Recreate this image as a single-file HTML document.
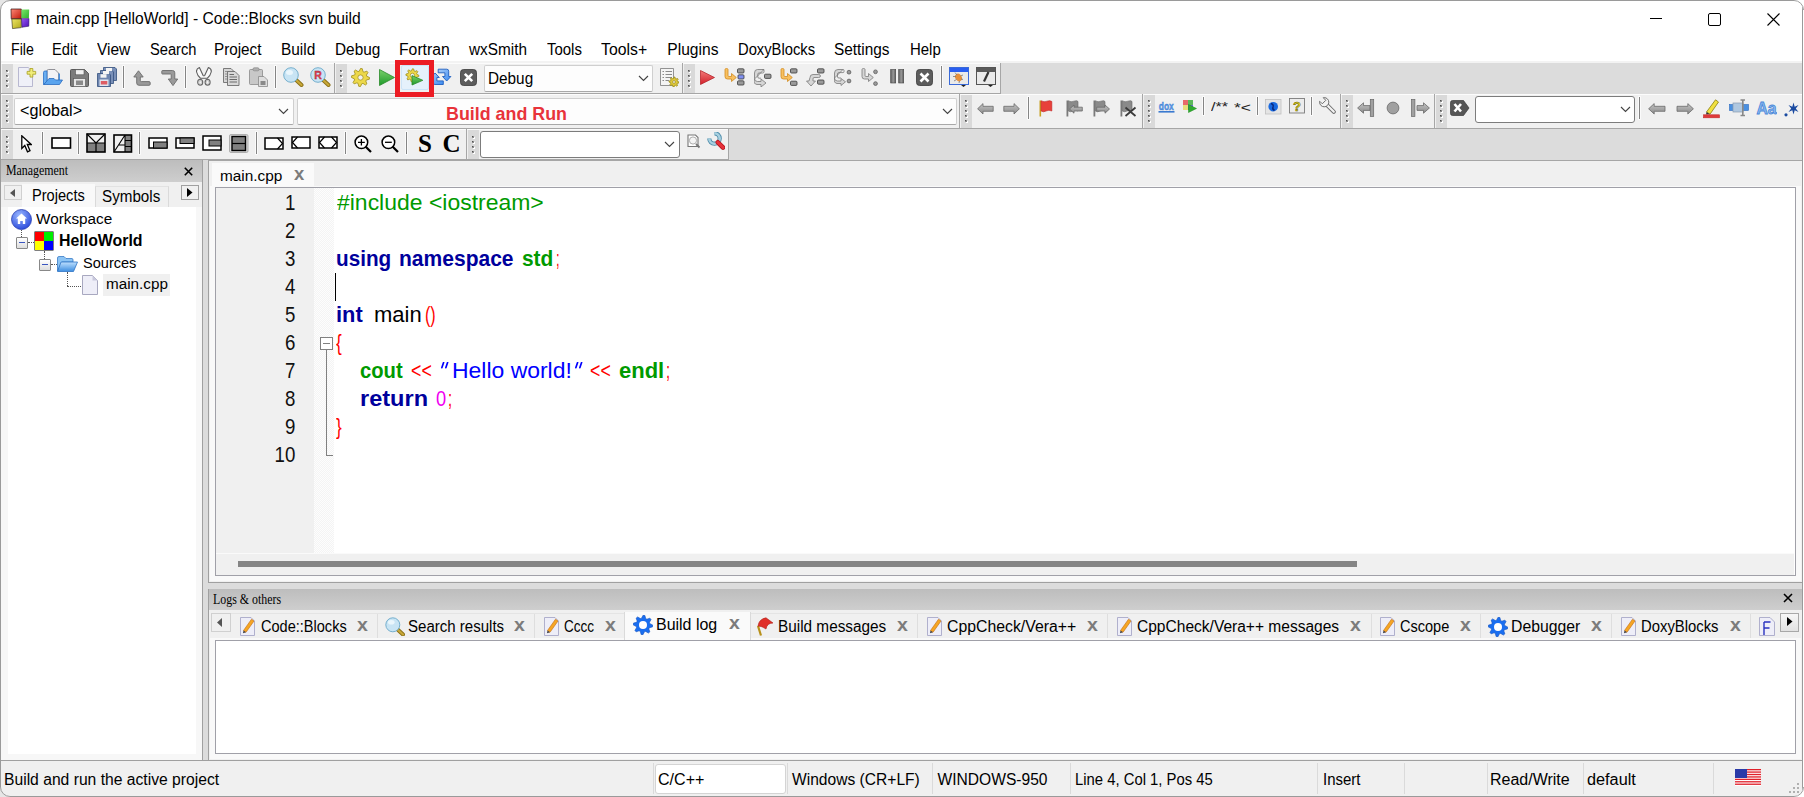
<!DOCTYPE html>
<html><head><meta charset="utf-8"><style>
html,body{margin:0;padding:0;}
body{width:1804px;height:797px;overflow:hidden;position:relative;background:#fff;font-family:"Liberation Sans",sans-serif;}
body>div,body>svg{position:absolute;}
.t{white-space:pre;}
</style></head><body>
<div style="left:0px;top:0px;width:1804px;height:797px;background:#fff"></div>
<div class="t" style="left:35.50px;top:10.71px;font-size:15.7px;line-height:15.7px;color:#000;font-weight:normal;font-family:'Liberation Sans', sans-serif;transform:scaleX(0.9966);transform-origin:0 0;">main.cpp [HelloWorld] - Code::Blocks svn build</div>
<svg style="left:10px;top:8px" width="21" height="22" viewBox="0 0 21 22"><defs><linearGradient id="lr" x1="0" y1="0" x2="1" y2="1"><stop offset="0" stop-color="#ff8a78"/><stop offset="1" stop-color="#c01808"/></linearGradient><linearGradient id="lg" x1="0" y1="0" x2="1" y2="1"><stop offset="0" stop-color="#78e868"/><stop offset="1" stop-color="#30b030"/></linearGradient><linearGradient id="ly" x1="0" y1="0" x2="1" y2="1"><stop offset="0" stop-color="#eee668"/><stop offset="1" stop-color="#b0a818"/></linearGradient><linearGradient id="lp" x1="0" y1="0" x2="1" y2="1"><stop offset="0" stop-color="#9a58f0"/><stop offset="1" stop-color="#4a10b8"/></linearGradient></defs><path d="M1 1H11.3V10.8H1.2Z" fill="url(#lr)" stroke="#301010" stroke-width="0.7"/><path d="M11.5 1.5H19.2L18.9 10H11.5Z" fill="url(#lg)"/><path d="M1.8 11H11.3V19.6L2.5 20.6Z" fill="url(#ly)" stroke="#302a10" stroke-width="0.6"/><path d="M11.5 10.6H19L18.8 18.2L12 19.3Z" fill="url(#lp)" stroke="#200850" stroke-width="0.5"/></svg>
<div style="left:1650px;top:18px;width:12px;height:1px;background:#000"></div>
<div style="left:1708px;top:13px;width:11px;height:11px;border:1px solid #000;border-radius:2px"></div>
<svg style="left:1766.5px;top:12.5px" width="13" height="13" viewBox="0 0 13 13"><path d="M0.5 0.5L12.5 12.5M12.5 0.5L0.5 12.5" stroke="#000" stroke-width="1.1"/></svg>
<div class="t" style="left:10.60px;top:42.09px;font-size:15.6px;line-height:15.6px;color:#000;font-weight:normal;font-family:'Liberation Sans', sans-serif;transform:scaleX(0.9080);transform-origin:0 0;">File</div>
<div class="t" style="left:52.10px;top:42.09px;font-size:15.6px;line-height:15.6px;color:#000;font-weight:normal;font-family:'Liberation Sans', sans-serif;transform:scaleX(0.9429);transform-origin:0 0;">Edit</div>
<div class="t" style="left:97.10px;top:42.09px;font-size:15.6px;line-height:15.6px;color:#000;font-weight:normal;font-family:'Liberation Sans', sans-serif;transform:scaleX(0.9941);transform-origin:0 0;">View</div>
<div class="t" style="left:149.50px;top:42.09px;font-size:15.6px;line-height:15.6px;color:#000;font-weight:normal;font-family:'Liberation Sans', sans-serif;transform:scaleX(0.9408);transform-origin:0 0;">Search</div>
<div class="t" style="left:214.20px;top:42.09px;font-size:15.6px;line-height:15.6px;color:#000;font-weight:normal;font-family:'Liberation Sans', sans-serif;transform:scaleX(0.9776);transform-origin:0 0;">Project</div>
<div class="t" style="left:280.70px;top:42.09px;font-size:15.6px;line-height:15.6px;color:#000;font-weight:normal;font-family:'Liberation Sans', sans-serif;transform:scaleX(0.9886);transform-origin:0 0;">Build</div>
<div class="t" style="left:334.70px;top:42.09px;font-size:15.6px;line-height:15.6px;color:#000;font-weight:normal;font-family:'Liberation Sans', sans-serif;transform:scaleX(0.9848);transform-origin:0 0;">Debug</div>
<div class="t" style="left:399.20px;top:42.09px;font-size:15.6px;line-height:15.6px;color:#000;font-weight:normal;font-family:'Liberation Sans', sans-serif;transform:scaleX(1.0100);transform-origin:0 0;">Fortran</div>
<div class="t" style="left:469.28px;top:42.09px;font-size:15.6px;line-height:15.6px;color:#000;font-weight:normal;font-family:'Liberation Sans', sans-serif;transform:scaleX(0.9833);transform-origin:0 0;">wxSmith</div>
<div class="t" style="left:546.50px;top:42.09px;font-size:15.6px;line-height:15.6px;color:#000;font-weight:normal;font-family:'Liberation Sans', sans-serif;transform:scaleX(0.9595);transform-origin:0 0;">Tools</div>
<div class="t" style="left:601.40px;top:42.09px;font-size:15.6px;line-height:15.6px;color:#000;font-weight:normal;font-family:'Liberation Sans', sans-serif;transform:scaleX(1.0130);transform-origin:0 0;">Tools+</div>
<div class="t" style="left:667.30px;top:42.09px;font-size:15.6px;line-height:15.6px;color:#000;font-weight:normal;font-family:'Liberation Sans', sans-serif;transform:scaleX(1.0000);transform-origin:0 0;">Plugins</div>
<div class="t" style="left:737.70px;top:42.09px;font-size:15.6px;line-height:15.6px;color:#000;font-weight:normal;font-family:'Liberation Sans', sans-serif;transform:scaleX(0.9463);transform-origin:0 0;">DoxyBlocks</div>
<div class="t" style="left:834.20px;top:42.09px;font-size:15.6px;line-height:15.6px;color:#000;font-weight:normal;font-family:'Liberation Sans', sans-serif;transform:scaleX(0.9860);transform-origin:0 0;">Settings</div>
<div class="t" style="left:909.60px;top:42.09px;font-size:15.6px;line-height:15.6px;color:#000;font-weight:normal;font-family:'Liberation Sans', sans-serif;transform:scaleX(0.9594);transform-origin:0 0;">Help</div>
<div style="left:1px;top:62px;width:1802px;height:99px;background:#dcdcdc"></div>
<div style="left:1px;top:61px;width:1802px;height:2px;background:#f3f3f3"></div>
<div style="left:1px;top:63px;width:334px;height:31px;background:#f0f0f0;box-shadow:inset 0 1px 0 #fcfcfc;border-right:1px solid #a6a6a6;border-bottom:1px solid #a6a6a6;box-sizing:border-box"></div>
<div style="left:335px;top:63px;width:348px;height:31px;background:#f0f0f0;box-shadow:inset 0 1px 0 #fcfcfc;border-right:1px solid #a6a6a6;border-bottom:1px solid #a6a6a6;box-sizing:border-box"></div>
<div style="left:683px;top:63px;width:318px;height:31px;background:#f0f0f0;box-shadow:inset 0 1px 0 #fcfcfc;border-right:1px solid #a6a6a6;border-bottom:1px solid #a6a6a6;box-sizing:border-box"></div>
<div style="left:1px;top:94px;width:959px;height:35px;background:#f0f0f0;box-shadow:inset 0 1px 0 #fcfcfc;border-right:1px solid #a6a6a6;border-bottom:1px solid #a6a6a6;box-sizing:border-box"></div>
<div style="left:960px;top:94px;width:183px;height:35px;background:#f0f0f0;box-shadow:inset 0 1px 0 #fcfcfc;border-right:1px solid #a6a6a6;border-bottom:1px solid #a6a6a6;box-sizing:border-box"></div>
<div style="left:1143px;top:94px;width:198px;height:35px;background:#f0f0f0;box-shadow:inset 0 1px 0 #fcfcfc;border-right:1px solid #a6a6a6;border-bottom:1px solid #a6a6a6;box-sizing:border-box"></div>
<div style="left:1341px;top:94px;width:94px;height:35px;background:#f0f0f0;box-shadow:inset 0 1px 0 #fcfcfc;border-right:1px solid #a6a6a6;border-bottom:1px solid #a6a6a6;box-sizing:border-box"></div>
<div style="left:1435px;top:94px;width:368px;height:35px;background:#f0f0f0;box-shadow:inset 0 1px 0 #fcfcfc;border-right:1px solid #a6a6a6;border-bottom:1px solid #a6a6a6;box-sizing:border-box"></div>
<div style="left:1px;top:129px;width:466px;height:31px;background:#f0f0f0;box-shadow:inset 0 1px 0 #fcfcfc;border-right:1px solid #a6a6a6;border-bottom:1px solid #a6a6a6;box-sizing:border-box"></div>
<div style="left:467px;top:129px;width:262px;height:31px;background:#f0f0f0;box-shadow:inset 0 1px 0 #fcfcfc;border-right:1px solid #a6a6a6;border-bottom:1px solid #a6a6a6;box-sizing:border-box"></div>
<div style="left:2px;top:64px;width:11px;height:29px;background:#d9d9d9"></div>
<div style="left:6px;top:70px;width:2px;height:2px;background:#8a8a8a"></div>
<div style="left:6px;top:70px;width:1px;height:1px;background:#505050"></div>
<div style="left:7px;top:72px;width:2px;height:1px;background:#fff"></div>
<div style="left:8px;top:71px;width:1px;height:1px;background:#fff"></div>
<div style="left:6px;top:75px;width:2px;height:2px;background:#8a8a8a"></div>
<div style="left:6px;top:75px;width:1px;height:1px;background:#505050"></div>
<div style="left:7px;top:77px;width:2px;height:1px;background:#fff"></div>
<div style="left:8px;top:76px;width:1px;height:1px;background:#fff"></div>
<div style="left:6px;top:80px;width:2px;height:2px;background:#8a8a8a"></div>
<div style="left:6px;top:80px;width:1px;height:1px;background:#505050"></div>
<div style="left:7px;top:82px;width:2px;height:1px;background:#fff"></div>
<div style="left:8px;top:81px;width:1px;height:1px;background:#fff"></div>
<div style="left:6px;top:85px;width:2px;height:2px;background:#8a8a8a"></div>
<div style="left:6px;top:85px;width:1px;height:1px;background:#505050"></div>
<div style="left:7px;top:87px;width:2px;height:1px;background:#fff"></div>
<div style="left:8px;top:86px;width:1px;height:1px;background:#fff"></div>
<div style="left:336px;top:64px;width:11px;height:29px;background:#d9d9d9"></div>
<div style="left:340px;top:70px;width:2px;height:2px;background:#8a8a8a"></div>
<div style="left:340px;top:70px;width:1px;height:1px;background:#505050"></div>
<div style="left:341px;top:72px;width:2px;height:1px;background:#fff"></div>
<div style="left:342px;top:71px;width:1px;height:1px;background:#fff"></div>
<div style="left:340px;top:75px;width:2px;height:2px;background:#8a8a8a"></div>
<div style="left:340px;top:75px;width:1px;height:1px;background:#505050"></div>
<div style="left:341px;top:77px;width:2px;height:1px;background:#fff"></div>
<div style="left:342px;top:76px;width:1px;height:1px;background:#fff"></div>
<div style="left:340px;top:80px;width:2px;height:2px;background:#8a8a8a"></div>
<div style="left:340px;top:80px;width:1px;height:1px;background:#505050"></div>
<div style="left:341px;top:82px;width:2px;height:1px;background:#fff"></div>
<div style="left:342px;top:81px;width:1px;height:1px;background:#fff"></div>
<div style="left:340px;top:85px;width:2px;height:2px;background:#8a8a8a"></div>
<div style="left:340px;top:85px;width:1px;height:1px;background:#505050"></div>
<div style="left:341px;top:87px;width:2px;height:1px;background:#fff"></div>
<div style="left:342px;top:86px;width:1px;height:1px;background:#fff"></div>
<div style="left:684px;top:64px;width:11px;height:29px;background:#d9d9d9"></div>
<div style="left:688px;top:70px;width:2px;height:2px;background:#8a8a8a"></div>
<div style="left:688px;top:70px;width:1px;height:1px;background:#505050"></div>
<div style="left:689px;top:72px;width:2px;height:1px;background:#fff"></div>
<div style="left:690px;top:71px;width:1px;height:1px;background:#fff"></div>
<div style="left:688px;top:75px;width:2px;height:2px;background:#8a8a8a"></div>
<div style="left:688px;top:75px;width:1px;height:1px;background:#505050"></div>
<div style="left:689px;top:77px;width:2px;height:1px;background:#fff"></div>
<div style="left:690px;top:76px;width:1px;height:1px;background:#fff"></div>
<div style="left:688px;top:80px;width:2px;height:2px;background:#8a8a8a"></div>
<div style="left:688px;top:80px;width:1px;height:1px;background:#505050"></div>
<div style="left:689px;top:82px;width:2px;height:1px;background:#fff"></div>
<div style="left:690px;top:81px;width:1px;height:1px;background:#fff"></div>
<div style="left:688px;top:85px;width:2px;height:2px;background:#8a8a8a"></div>
<div style="left:688px;top:85px;width:1px;height:1px;background:#505050"></div>
<div style="left:689px;top:87px;width:2px;height:1px;background:#fff"></div>
<div style="left:690px;top:86px;width:1px;height:1px;background:#fff"></div>
<div style="left:2px;top:95px;width:11px;height:33px;background:#d9d9d9"></div>
<div style="left:6px;top:100px;width:2px;height:2px;background:#8a8a8a"></div>
<div style="left:6px;top:100px;width:1px;height:1px;background:#505050"></div>
<div style="left:7px;top:102px;width:2px;height:1px;background:#fff"></div>
<div style="left:8px;top:101px;width:1px;height:1px;background:#fff"></div>
<div style="left:6px;top:105px;width:2px;height:2px;background:#8a8a8a"></div>
<div style="left:6px;top:105px;width:1px;height:1px;background:#505050"></div>
<div style="left:7px;top:107px;width:2px;height:1px;background:#fff"></div>
<div style="left:8px;top:106px;width:1px;height:1px;background:#fff"></div>
<div style="left:6px;top:110px;width:2px;height:2px;background:#8a8a8a"></div>
<div style="left:6px;top:110px;width:1px;height:1px;background:#505050"></div>
<div style="left:7px;top:112px;width:2px;height:1px;background:#fff"></div>
<div style="left:8px;top:111px;width:1px;height:1px;background:#fff"></div>
<div style="left:6px;top:115px;width:2px;height:2px;background:#8a8a8a"></div>
<div style="left:6px;top:115px;width:1px;height:1px;background:#505050"></div>
<div style="left:7px;top:117px;width:2px;height:1px;background:#fff"></div>
<div style="left:8px;top:116px;width:1px;height:1px;background:#fff"></div>
<div style="left:6px;top:120px;width:2px;height:2px;background:#8a8a8a"></div>
<div style="left:6px;top:120px;width:1px;height:1px;background:#505050"></div>
<div style="left:7px;top:122px;width:2px;height:1px;background:#fff"></div>
<div style="left:8px;top:121px;width:1px;height:1px;background:#fff"></div>
<div style="left:961px;top:95px;width:11px;height:33px;background:#d9d9d9"></div>
<div style="left:965px;top:100px;width:2px;height:2px;background:#8a8a8a"></div>
<div style="left:965px;top:100px;width:1px;height:1px;background:#505050"></div>
<div style="left:966px;top:102px;width:2px;height:1px;background:#fff"></div>
<div style="left:967px;top:101px;width:1px;height:1px;background:#fff"></div>
<div style="left:965px;top:105px;width:2px;height:2px;background:#8a8a8a"></div>
<div style="left:965px;top:105px;width:1px;height:1px;background:#505050"></div>
<div style="left:966px;top:107px;width:2px;height:1px;background:#fff"></div>
<div style="left:967px;top:106px;width:1px;height:1px;background:#fff"></div>
<div style="left:965px;top:110px;width:2px;height:2px;background:#8a8a8a"></div>
<div style="left:965px;top:110px;width:1px;height:1px;background:#505050"></div>
<div style="left:966px;top:112px;width:2px;height:1px;background:#fff"></div>
<div style="left:967px;top:111px;width:1px;height:1px;background:#fff"></div>
<div style="left:965px;top:115px;width:2px;height:2px;background:#8a8a8a"></div>
<div style="left:965px;top:115px;width:1px;height:1px;background:#505050"></div>
<div style="left:966px;top:117px;width:2px;height:1px;background:#fff"></div>
<div style="left:967px;top:116px;width:1px;height:1px;background:#fff"></div>
<div style="left:965px;top:120px;width:2px;height:2px;background:#8a8a8a"></div>
<div style="left:965px;top:120px;width:1px;height:1px;background:#505050"></div>
<div style="left:966px;top:122px;width:2px;height:1px;background:#fff"></div>
<div style="left:967px;top:121px;width:1px;height:1px;background:#fff"></div>
<div style="left:1144px;top:95px;width:11px;height:33px;background:#d9d9d9"></div>
<div style="left:1148px;top:100px;width:2px;height:2px;background:#8a8a8a"></div>
<div style="left:1148px;top:100px;width:1px;height:1px;background:#505050"></div>
<div style="left:1149px;top:102px;width:2px;height:1px;background:#fff"></div>
<div style="left:1150px;top:101px;width:1px;height:1px;background:#fff"></div>
<div style="left:1148px;top:105px;width:2px;height:2px;background:#8a8a8a"></div>
<div style="left:1148px;top:105px;width:1px;height:1px;background:#505050"></div>
<div style="left:1149px;top:107px;width:2px;height:1px;background:#fff"></div>
<div style="left:1150px;top:106px;width:1px;height:1px;background:#fff"></div>
<div style="left:1148px;top:110px;width:2px;height:2px;background:#8a8a8a"></div>
<div style="left:1148px;top:110px;width:1px;height:1px;background:#505050"></div>
<div style="left:1149px;top:112px;width:2px;height:1px;background:#fff"></div>
<div style="left:1150px;top:111px;width:1px;height:1px;background:#fff"></div>
<div style="left:1148px;top:115px;width:2px;height:2px;background:#8a8a8a"></div>
<div style="left:1148px;top:115px;width:1px;height:1px;background:#505050"></div>
<div style="left:1149px;top:117px;width:2px;height:1px;background:#fff"></div>
<div style="left:1150px;top:116px;width:1px;height:1px;background:#fff"></div>
<div style="left:1148px;top:120px;width:2px;height:2px;background:#8a8a8a"></div>
<div style="left:1148px;top:120px;width:1px;height:1px;background:#505050"></div>
<div style="left:1149px;top:122px;width:2px;height:1px;background:#fff"></div>
<div style="left:1150px;top:121px;width:1px;height:1px;background:#fff"></div>
<div style="left:1342px;top:95px;width:11px;height:33px;background:#d9d9d9"></div>
<div style="left:1346px;top:100px;width:2px;height:2px;background:#8a8a8a"></div>
<div style="left:1346px;top:100px;width:1px;height:1px;background:#505050"></div>
<div style="left:1347px;top:102px;width:2px;height:1px;background:#fff"></div>
<div style="left:1348px;top:101px;width:1px;height:1px;background:#fff"></div>
<div style="left:1346px;top:105px;width:2px;height:2px;background:#8a8a8a"></div>
<div style="left:1346px;top:105px;width:1px;height:1px;background:#505050"></div>
<div style="left:1347px;top:107px;width:2px;height:1px;background:#fff"></div>
<div style="left:1348px;top:106px;width:1px;height:1px;background:#fff"></div>
<div style="left:1346px;top:110px;width:2px;height:2px;background:#8a8a8a"></div>
<div style="left:1346px;top:110px;width:1px;height:1px;background:#505050"></div>
<div style="left:1347px;top:112px;width:2px;height:1px;background:#fff"></div>
<div style="left:1348px;top:111px;width:1px;height:1px;background:#fff"></div>
<div style="left:1346px;top:115px;width:2px;height:2px;background:#8a8a8a"></div>
<div style="left:1346px;top:115px;width:1px;height:1px;background:#505050"></div>
<div style="left:1347px;top:117px;width:2px;height:1px;background:#fff"></div>
<div style="left:1348px;top:116px;width:1px;height:1px;background:#fff"></div>
<div style="left:1346px;top:120px;width:2px;height:2px;background:#8a8a8a"></div>
<div style="left:1346px;top:120px;width:1px;height:1px;background:#505050"></div>
<div style="left:1347px;top:122px;width:2px;height:1px;background:#fff"></div>
<div style="left:1348px;top:121px;width:1px;height:1px;background:#fff"></div>
<div style="left:1436px;top:95px;width:11px;height:33px;background:#d9d9d9"></div>
<div style="left:1440px;top:100px;width:2px;height:2px;background:#8a8a8a"></div>
<div style="left:1440px;top:100px;width:1px;height:1px;background:#505050"></div>
<div style="left:1441px;top:102px;width:2px;height:1px;background:#fff"></div>
<div style="left:1442px;top:101px;width:1px;height:1px;background:#fff"></div>
<div style="left:1440px;top:105px;width:2px;height:2px;background:#8a8a8a"></div>
<div style="left:1440px;top:105px;width:1px;height:1px;background:#505050"></div>
<div style="left:1441px;top:107px;width:2px;height:1px;background:#fff"></div>
<div style="left:1442px;top:106px;width:1px;height:1px;background:#fff"></div>
<div style="left:1440px;top:110px;width:2px;height:2px;background:#8a8a8a"></div>
<div style="left:1440px;top:110px;width:1px;height:1px;background:#505050"></div>
<div style="left:1441px;top:112px;width:2px;height:1px;background:#fff"></div>
<div style="left:1442px;top:111px;width:1px;height:1px;background:#fff"></div>
<div style="left:1440px;top:115px;width:2px;height:2px;background:#8a8a8a"></div>
<div style="left:1440px;top:115px;width:1px;height:1px;background:#505050"></div>
<div style="left:1441px;top:117px;width:2px;height:1px;background:#fff"></div>
<div style="left:1442px;top:116px;width:1px;height:1px;background:#fff"></div>
<div style="left:1440px;top:120px;width:2px;height:2px;background:#8a8a8a"></div>
<div style="left:1440px;top:120px;width:1px;height:1px;background:#505050"></div>
<div style="left:1441px;top:122px;width:2px;height:1px;background:#fff"></div>
<div style="left:1442px;top:121px;width:1px;height:1px;background:#fff"></div>
<div style="left:2px;top:130px;width:11px;height:29px;background:#d9d9d9"></div>
<div style="left:6px;top:136px;width:2px;height:2px;background:#8a8a8a"></div>
<div style="left:6px;top:136px;width:1px;height:1px;background:#505050"></div>
<div style="left:7px;top:138px;width:2px;height:1px;background:#fff"></div>
<div style="left:8px;top:137px;width:1px;height:1px;background:#fff"></div>
<div style="left:6px;top:141px;width:2px;height:2px;background:#8a8a8a"></div>
<div style="left:6px;top:141px;width:1px;height:1px;background:#505050"></div>
<div style="left:7px;top:143px;width:2px;height:1px;background:#fff"></div>
<div style="left:8px;top:142px;width:1px;height:1px;background:#fff"></div>
<div style="left:6px;top:146px;width:2px;height:2px;background:#8a8a8a"></div>
<div style="left:6px;top:146px;width:1px;height:1px;background:#505050"></div>
<div style="left:7px;top:148px;width:2px;height:1px;background:#fff"></div>
<div style="left:8px;top:147px;width:1px;height:1px;background:#fff"></div>
<div style="left:6px;top:151px;width:2px;height:2px;background:#8a8a8a"></div>
<div style="left:6px;top:151px;width:1px;height:1px;background:#505050"></div>
<div style="left:7px;top:153px;width:2px;height:1px;background:#fff"></div>
<div style="left:8px;top:152px;width:1px;height:1px;background:#fff"></div>
<div style="left:468px;top:130px;width:11px;height:29px;background:#d9d9d9"></div>
<div style="left:472px;top:136px;width:2px;height:2px;background:#8a8a8a"></div>
<div style="left:472px;top:136px;width:1px;height:1px;background:#505050"></div>
<div style="left:473px;top:138px;width:2px;height:1px;background:#fff"></div>
<div style="left:474px;top:137px;width:1px;height:1px;background:#fff"></div>
<div style="left:472px;top:141px;width:2px;height:2px;background:#8a8a8a"></div>
<div style="left:472px;top:141px;width:1px;height:1px;background:#505050"></div>
<div style="left:473px;top:143px;width:2px;height:1px;background:#fff"></div>
<div style="left:474px;top:142px;width:1px;height:1px;background:#fff"></div>
<div style="left:472px;top:146px;width:2px;height:2px;background:#8a8a8a"></div>
<div style="left:472px;top:146px;width:1px;height:1px;background:#505050"></div>
<div style="left:473px;top:148px;width:2px;height:1px;background:#fff"></div>
<div style="left:474px;top:147px;width:1px;height:1px;background:#fff"></div>
<div style="left:472px;top:151px;width:2px;height:2px;background:#8a8a8a"></div>
<div style="left:472px;top:151px;width:1px;height:1px;background:#505050"></div>
<div style="left:473px;top:153px;width:2px;height:1px;background:#fff"></div>
<div style="left:474px;top:152px;width:1px;height:1px;background:#fff"></div>
<div style="left:122px;top:65px;width:3px;height:24px;background:#fbfbfb;border-radius:1px"></div>
<div style="left:123px;top:66px;width:1px;height:22px;background:#858585"></div>
<div style="left:184px;top:65px;width:3px;height:24px;background:#fbfbfb;border-radius:1px"></div>
<div style="left:185px;top:66px;width:1px;height:22px;background:#858585"></div>
<div style="left:274px;top:65px;width:3px;height:24px;background:#fbfbfb;border-radius:1px"></div>
<div style="left:275px;top:66px;width:1px;height:22px;background:#858585"></div>
<div style="left:940px;top:65px;width:3px;height:24px;background:#fbfbfb;border-radius:1px"></div>
<div style="left:941px;top:66px;width:1px;height:22px;background:#858585"></div>
<div style="left:1027px;top:96px;width:3px;height:24px;background:#fbfbfb;border-radius:1px"></div>
<div style="left:1028px;top:97px;width:1px;height:22px;background:#858585"></div>
<div style="left:1638px;top:96px;width:3px;height:24px;background:#fbfbfb;border-radius:1px"></div>
<div style="left:1639px;top:97px;width:1px;height:22px;background:#858585"></div>
<div style="left:1202px;top:96px;width:3px;height:20px;background:#fbfbfb;border-radius:1px"></div>
<div style="left:1203px;top:97px;width:1px;height:18px;background:#858585"></div>
<div style="left:1256px;top:96px;width:3px;height:20px;background:#fbfbfb;border-radius:1px"></div>
<div style="left:1257px;top:97px;width:1px;height:18px;background:#858585"></div>
<div style="left:1310px;top:96px;width:3px;height:20px;background:#fbfbfb;border-radius:1px"></div>
<div style="left:1311px;top:97px;width:1px;height:18px;background:#858585"></div>
<div style="left:41px;top:131px;width:3px;height:24px;background:#fbfbfb;border-radius:1px"></div>
<div style="left:42px;top:132px;width:1px;height:22px;background:#858585"></div>
<div style="left:77px;top:131px;width:3px;height:24px;background:#fbfbfb;border-radius:1px"></div>
<div style="left:78px;top:132px;width:1px;height:22px;background:#858585"></div>
<div style="left:138px;top:131px;width:3px;height:24px;background:#fbfbfb;border-radius:1px"></div>
<div style="left:139px;top:132px;width:1px;height:22px;background:#858585"></div>
<div style="left:255px;top:131px;width:3px;height:24px;background:#fbfbfb;border-radius:1px"></div>
<div style="left:256px;top:132px;width:1px;height:22px;background:#858585"></div>
<div style="left:344px;top:131px;width:3px;height:24px;background:#fbfbfb;border-radius:1px"></div>
<div style="left:345px;top:132px;width:1px;height:22px;background:#858585"></div>
<div style="left:405px;top:131px;width:3px;height:24px;background:#fbfbfb;border-radius:1px"></div>
<div style="left:406px;top:132px;width:1px;height:22px;background:#858585"></div>
<div style="left:484px;top:65px;width:169px;height:27px;background:#fdfdfd;border:1px solid #cfcfcf;border-bottom-color:#a8a8a8;border-radius:2px;box-sizing:border-box"></div>
<svg style="left:638px;top:75px" width="11" height="7" viewBox="0 0 11 7"><path d="M1 1L5.5 5.5L10 1" fill="none" stroke="#444" stroke-width="1.15"/></svg>
<div class="t" style="left:487.90px;top:70.59px;font-size:15.6px;line-height:15.6px;color:#000;font-weight:normal;font-family:'Liberation Sans', sans-serif;transform:scaleX(0.9826);transform-origin:0 0;">Debug</div>
<div style="left:14px;top:98px;width:280px;height:27px;background:#fdfdfd;border:1px solid #cfcfcf;border-bottom-color:#a8a8a8;border-radius:2px;box-sizing:border-box"></div>
<svg style="left:278px;top:108px" width="11" height="7" viewBox="0 0 11 7"><path d="M1 1L5.5 5.5L10 1" fill="none" stroke="#444" stroke-width="1.15"/></svg>
<div class="t" style="left:19.80px;top:103.49px;font-size:15.6px;line-height:15.6px;color:#000;font-weight:normal;font-family:'Liberation Sans', sans-serif;transform:scaleX(1.0383);transform-origin:0 0;">&lt;global&gt;</div>
<div style="left:297px;top:98px;width:660px;height:27px;background:#fdfdfd;border:1px solid #cfcfcf;border-bottom-color:#a8a8a8;border-radius:2px;box-sizing:border-box"></div>
<svg style="left:942px;top:108px" width="11" height="7" viewBox="0 0 11 7"><path d="M1 1L5.5 5.5L10 1" fill="none" stroke="#444" stroke-width="1.15"/></svg>
<div style="left:1475px;top:96px;width:160px;height:27px;background:#fff;border:1px solid #7c7c7c;border-radius:3px;box-sizing:border-box"></div>
<svg style="left:1620px;top:106px" width="11" height="7" viewBox="0 0 11 7"><path d="M1 1L5.5 5.5L10 1" fill="none" stroke="#444" stroke-width="1.15"/></svg>
<div style="left:480px;top:131px;width:200px;height:27px;background:#fff;border:1px solid #7c7c7c;border-radius:3px;box-sizing:border-box"></div>
<svg style="left:664px;top:141px" width="11" height="7" viewBox="0 0 11 7"><path d="M1 1L5.5 5.5L10 1" fill="none" stroke="#444" stroke-width="1.15"/></svg>
<div class="t" style="left:446.00px;top:104.76px;font-size:18.6px;line-height:18.6px;color:#e8333a;font-weight:bold;font-family:'Liberation Sans', sans-serif;transform:scaleX(0.9603);transform-origin:0 0;">Build and Run</div>
<div style="left:401px;top:65px;width:28px;height:25px;background:#e5f1fb;border:1px solid #cce4f7;border-radius:2px;box-sizing:border-box"></div>
<div style="left:1px;top:160px;width:202px;height:601px;background:#f7f7f7;border-right:1px solid #a0a0a0;border-bottom:1px solid #a0a0a0;box-sizing:border-box"></div>
<div style="left:203px;top:160px;width:5px;height:601px;background:#dcdcdc"></div>
<div style="left:1px;top:160px;width:201px;height:22px;background:linear-gradient(#bdbdbd,#cecece)"></div>
<div class="t" style="left:6.00px;top:164.08px;font-size:14px;line-height:14px;color:#000;font-weight:normal;font-family:'Liberation Serif', serif;transform:scaleX(0.8493);transform-origin:0 0;">Management</div>
<svg style="left:184px;top:167px" width="9" height="9" viewBox="0 0 9 9"><path d="M0.8 0.8L8.2 8.2M8.2 0.8L0.8 8.2" stroke="#000" stroke-width="1.6"/></svg>
<div style="left:1px;top:182px;width:201px;height:25px;background:#f0f0f0"></div>
<div style="left:4px;top:185px;width:18px;height:15px;background:#f0f0f0;border:1px solid #d0d0d0;box-sizing:border-box"></div>
<svg style="left:10px;top:189px" width="6" height="8" viewBox="0 0 6 8"><path d="M5 0L0 4L5 8Z" fill="#555"/></svg>
<div style="left:181px;top:185px;width:18px;height:15px;background:#f0f0f0;border:1px solid #a0a0a0;box-sizing:border-box"></div>
<svg style="left:187px;top:188px" width="6" height="9" viewBox="0 0 6 9"><path d="M0 0L5.5 4.5L0 9Z" fill="#000"/></svg>
<div style="left:22px;top:184px;width:73px;height:24px;background:#f9f9f9"></div>
<div style="left:95px;top:186px;width:74px;height:21px;background:#f0f0f0;border-top:1px solid #e2e2e2;border-right:1px solid #dadada;border-left:1px solid #dadada;box-sizing:border-box"></div>
<div class="t" style="left:31.80px;top:188.29px;font-size:15.6px;line-height:15.6px;color:#000;font-weight:normal;font-family:'Liberation Sans', sans-serif;transform:scaleX(0.9368);transform-origin:0 0;">Projects</div>
<div class="t" style="left:101.70px;top:189.29px;font-size:15.6px;line-height:15.6px;color:#000;font-weight:normal;font-family:'Liberation Sans', sans-serif;transform:scaleX(0.9750);transform-origin:0 0;">Symbols</div>
<div style="left:8px;top:207px;width:188px;height:547px;background:#fff"></div>
<svg style="left:11px;top:209px" width="21" height="21" viewBox="0 0 21 21"><defs><radialGradient id="wsg" cx="0.4" cy="0.3" r="0.8"><stop offset="0" stop-color="#9ab8ff"/><stop offset="1" stop-color="#1f3fd8"/></radialGradient></defs><circle cx="10.5" cy="10.5" r="10" fill="url(#wsg)" stroke="#2a3fae" stroke-width="0.8"/><path d="M10.5 4.5L16 9.5H14.2V15H11.8V12H9.2V15H6.8V9.5H5Z" fill="#fff"/></svg>
<div class="t" style="left:36.00px;top:211.18px;font-size:15.5px;line-height:15.5px;color:#000;font-weight:normal;font-family:'Liberation Sans', sans-serif;transform:scaleX(0.9872);transform-origin:0 0;">Workspace</div>
<div style="left:21px;top:230px;width:0;height:7px;border-left:1px dotted #555"></div>
<div style="left:28px;top:242px;width:6px;height:0;border-top:1px dotted #555"></div>
<div style="left:16px;top:237px;width:12px;height:12px;background:linear-gradient(#fff,#ddd);border:1px solid #888;border-radius:1px;box-sizing:border-box"></div>
<div style="left:19px;top:242px;width:6px;height:1px;background:#3a55c0"></div>
<svg style="left:34px;top:231px" width="20" height="20" viewBox="0 0 20 20"><rect x="0.5" y="0.5" width="19" height="19" fill="#000"/><rect x="1" y="1" width="9" height="9" fill="#f00"/><rect x="10" y="1" width="9" height="9" fill="#0e0"/><rect x="1" y="10" width="9" height="9" fill="#ff0"/><rect x="10" y="10" width="9" height="9" fill="#00f"/></svg>
<div class="t" style="left:59.00px;top:232.94px;font-size:15.9px;line-height:15.9px;color:#000;font-weight:bold;font-family:'Liberation Sans', sans-serif;transform:scaleX(1.0000);transform-origin:0 0;">HelloWorld</div>
<div style="left:44px;top:251px;width:0;height:8px;border-left:1px dotted #555"></div>
<div style="left:51px;top:264px;width:6px;height:0;border-top:1px dotted #555"></div>
<div style="left:39px;top:259px;width:12px;height:12px;background:linear-gradient(#fff,#ddd);border:1px solid #888;border-radius:1px;box-sizing:border-box"></div>
<div style="left:42px;top:264px;width:6px;height:1px;background:#3a55c0"></div>
<svg style="left:57px;top:256px" width="21" height="16" viewBox="0 0 21 16"><defs><linearGradient id="fg" x1="0" y1="0" x2="0" y2="1"><stop offset="0" stop-color="#bfe0ff"/><stop offset="1" stop-color="#3d8ee0"/></linearGradient></defs><path d="M0.5 2Q0.5 0.5 2 0.5H7L9 2.5H15Q16 2.5 16 4V6H5L0.5 15Z" fill="#8cc4f4" stroke="#3a7cc8" stroke-width="0.8"/><path d="M4 6H20.5L16.5 15.5H0.5Z" fill="url(#fg)" stroke="#2f74c4" stroke-width="0.8"/></svg>
<div class="t" style="left:82.50px;top:254.88px;font-size:15.5px;line-height:15.5px;color:#000;font-weight:normal;font-family:'Liberation Sans', sans-serif;transform:scaleX(0.9386);transform-origin:0 0;">Sources</div>
<div style="left:67px;top:272px;width:0;height:14px;border-left:1px dotted #555"></div>
<div style="left:67px;top:286px;width:14px;height:0;border-top:1px dotted #555"></div>
<svg style="left:82px;top:275px" width="16" height="20" viewBox="0 0 16 20"><path d="M0.5 0.5H10.5L15.5 5.5V19.5H0.5Z" fill="#eeeef8" stroke="#a8a8c0"/><path d="M10.5 0.5V5.5H15.5Z" fill="#c8c8dc"/></svg>
<div style="left:103px;top:274px;width:67px;height:22px;background:#f0f0f0"></div>
<div class="t" style="left:106.00px;top:275.88px;font-size:15.5px;line-height:15.5px;color:#000;font-weight:normal;font-family:'Liberation Sans', sans-serif;transform:scaleX(0.9841);transform-origin:0 0;">main.cpp</div>
<div style="left:208px;top:160px;width:1595px;height:423px;background:#f0f0f0;border-top:1px solid #a6a6a6;border-left:1px solid #a0a0a0;border-bottom:1px solid #a0a0a0;border-right:1px solid #a0a0a0;box-sizing:border-box"></div>
<div style="left:212px;top:163px;width:102px;height:25px;background:#fafafa"></div>
<div class="t" style="left:219.50px;top:167.88px;font-size:15.5px;line-height:15.5px;color:#000;font-weight:normal;font-family:'Liberation Sans', sans-serif;transform:scaleX(0.9921);transform-origin:0 0;">main.cpp</div>
<div class="t" style="left:294.00px;top:164.84px;font-size:18.5px;line-height:18.5px;color:#7c7c7c;font-weight:bold;font-family:'Liberation Sans', sans-serif;transform:scaleX(1.0000);transform-origin:0 0;">x</div>
<div style="left:210px;top:186px;width:1591px;height:395px;background:#f9f9f9"></div>
<div style="left:215px;top:187px;width:1581px;height:389px;background:#fff;border:1px solid #a0a0a8;box-sizing:border-box"></div>
<div style="left:216px;top:188px;width:98px;height:365px;background:#f0f0f0"></div>
<div style="left:314px;top:188px;width:20px;height:365px;background:repeating-conic-gradient(#f4f4f4 0 25%,#fdfdfd 0 50%) 0 0/2px 2px"></div>
<div style="left:216px;top:553px;width:1578px;height:22px;background:#f0f0f0;border-top:1px solid #fafafa;box-sizing:border-box"></div>
<div style="left:238px;top:561px;width:1119px;height:6px;background:#858585"></div>
<div class="t" style="left:216px;width:79.4px;text-align:right;top:192.1px;font-size:22.5px;line-height:22.5px;color:#111;transform:scaleX(0.83);transform-origin:100% 0">1</div>
<div class="t" style="left:216px;width:79.4px;text-align:right;top:220.1px;font-size:22.5px;line-height:22.5px;color:#111;transform:scaleX(0.83);transform-origin:100% 0">2</div>
<div class="t" style="left:216px;width:79.4px;text-align:right;top:248.1px;font-size:22.5px;line-height:22.5px;color:#111;transform:scaleX(0.83);transform-origin:100% 0">3</div>
<div class="t" style="left:216px;width:79.4px;text-align:right;top:276.1px;font-size:22.5px;line-height:22.5px;color:#111;transform:scaleX(0.83);transform-origin:100% 0">4</div>
<div class="t" style="left:216px;width:79.4px;text-align:right;top:304.1px;font-size:22.5px;line-height:22.5px;color:#111;transform:scaleX(0.83);transform-origin:100% 0">5</div>
<div class="t" style="left:216px;width:79.4px;text-align:right;top:332.1px;font-size:22.5px;line-height:22.5px;color:#111;transform:scaleX(0.83);transform-origin:100% 0">6</div>
<div class="t" style="left:216px;width:79.4px;text-align:right;top:360.1px;font-size:22.5px;line-height:22.5px;color:#111;transform:scaleX(0.83);transform-origin:100% 0">7</div>
<div class="t" style="left:216px;width:79.4px;text-align:right;top:388.1px;font-size:22.5px;line-height:22.5px;color:#111;transform:scaleX(0.83);transform-origin:100% 0">8</div>
<div class="t" style="left:216px;width:79.4px;text-align:right;top:416.1px;font-size:22.5px;line-height:22.5px;color:#111;transform:scaleX(0.83);transform-origin:100% 0">9</div>
<div class="t" style="left:216px;width:79.4px;text-align:right;top:444.1px;font-size:22.5px;line-height:22.5px;color:#111;transform:scaleX(0.83);transform-origin:100% 0">10</div>
<div style="left:320px;top:337px;width:13px;height:13px;background:#fff;border:1px solid #808080;box-sizing:border-box"></div>
<div style="left:323px;top:343px;width:7px;height:1px;background:#808080"></div>
<div style="left:326px;top:350px;width:1px;height:105px;background:#808080"></div>
<div style="left:326px;top:455px;width:7px;height:1px;background:#808080"></div>
<div style="left:335px;top:273px;width:1px;height:28px;background:#000"></div>
<svg style="left:441px;top:362px" width="8" height="7" viewBox="0 0 8 7"><path d="M2.6 0.6L0.9 5.6M6.6 0.6L4.9 5.6" stroke="#0000ff" stroke-width="1.7" stroke-linecap="round"/></svg>
<svg style="left:575px;top:362px" width="8" height="7" viewBox="0 0 8 7"><path d="M2.6 0.6L0.9 5.6M6.6 0.6L4.9 5.6" stroke="#0000ff" stroke-width="1.7" stroke-linecap="round"/></svg>
<div class="t" style="left:336.80px;top:192.18px;font-size:22px;line-height:22px;color:#009a00;font-weight:normal;font-family:'Liberation Sans', sans-serif;transform:scaleX(1.0434);transform-origin:0 0;">#include &lt;iostream&gt;</div>
<div class="t" style="left:335.50px;top:248.18px;font-size:22px;line-height:22px;color:#00009c;font-weight:bold;font-family:'Liberation Sans', sans-serif;transform:scaleX(0.9407);transform-origin:0 0;">using</div>
<div class="t" style="left:399.30px;top:248.18px;font-size:22px;line-height:22px;color:#00009c;font-weight:bold;font-family:'Liberation Sans', sans-serif;transform:scaleX(0.9558);transform-origin:0 0;">namespace</div>
<div class="t" style="left:521.70px;top:248.18px;font-size:22px;line-height:22px;color:#009a00;font-weight:bold;font-family:'Liberation Sans', sans-serif;transform:scaleX(0.9485);transform-origin:0 0;">std</div>
<div class="t" style="left:556.00px;top:248.18px;font-size:22px;line-height:22px;color:#ff0000;font-weight:normal;font-family:'Liberation Sans', sans-serif;transform:scaleX(0.5833);transform-origin:0 0;">;</div>
<div class="t" style="left:336.20px;top:304.18px;font-size:22px;line-height:22px;color:#00009c;font-weight:bold;font-family:'Liberation Sans', sans-serif;transform:scaleX(0.9929);transform-origin:0 0;">int</div>
<div class="t" style="left:374.00px;top:304.18px;font-size:22px;line-height:22px;color:#000;font-weight:normal;font-family:'Liberation Sans', sans-serif;transform:scaleX(1.0000);transform-origin:0 0;">main</div>
<div class="t" style="left:425.00px;top:304.18px;font-size:22px;line-height:22px;color:#ff0000;font-weight:normal;font-family:'Liberation Sans', sans-serif;transform:scaleX(0.7333);transform-origin:0 0;">()</div>
<div class="t" style="left:336.00px;top:332.18px;font-size:22px;line-height:22px;color:#ff0000;font-weight:normal;font-family:'Liberation Sans', sans-serif;transform:scaleX(0.7857);transform-origin:0 0;">{</div>
<div class="t" style="left:359.50px;top:360.18px;font-size:22px;line-height:22px;color:#009a00;font-weight:bold;font-family:'Liberation Sans', sans-serif;transform:scaleX(0.9191);transform-origin:0 0;">cout</div>
<div class="t" style="left:411.00px;top:360.18px;font-size:22px;line-height:22px;color:#ff0000;font-weight:normal;font-family:'Liberation Sans', sans-serif;transform:scaleX(0.8077);transform-origin:0 0;">&lt;&lt;</div>
<div class="t" style="left:451.80px;top:360.18px;font-size:22px;line-height:22px;color:#0000ff;font-weight:normal;font-family:'Liberation Sans', sans-serif;transform:scaleX(1.0426);transform-origin:0 0;">Hello world!</div>
<div class="t" style="left:590.00px;top:360.18px;font-size:22px;line-height:22px;color:#ff0000;font-weight:normal;font-family:'Liberation Sans', sans-serif;transform:scaleX(0.8077);transform-origin:0 0;">&lt;&lt;</div>
<div class="t" style="left:619.00px;top:360.18px;font-size:22px;line-height:22px;color:#009a00;font-weight:bold;font-family:'Liberation Sans', sans-serif;transform:scaleX(1.0000);transform-origin:0 0;">endl</div>
<div class="t" style="left:666.00px;top:360.18px;font-size:22px;line-height:22px;color:#ff0000;font-weight:normal;font-family:'Liberation Sans', sans-serif;transform:scaleX(0.6667);transform-origin:0 0;">;</div>
<div class="t" style="left:359.50px;top:388.18px;font-size:22px;line-height:22px;color:#00009c;font-weight:bold;font-family:'Liberation Sans', sans-serif;transform:scaleX(1.0703);transform-origin:0 0;">return</div>
<div class="t" style="left:436.00px;top:388.18px;font-size:22px;line-height:22px;color:#f000f0;font-weight:normal;font-family:'Liberation Sans', sans-serif;transform:scaleX(0.8333);transform-origin:0 0;">0</div>
<div class="t" style="left:448.00px;top:388.18px;font-size:22px;line-height:22px;color:#ff0000;font-weight:normal;font-family:'Liberation Sans', sans-serif;transform:scaleX(0.6667);transform-origin:0 0;">;</div>
<div class="t" style="left:336.00px;top:416.18px;font-size:22px;line-height:22px;color:#ff0000;font-weight:normal;font-family:'Liberation Sans', sans-serif;transform:scaleX(0.7857);transform-origin:0 0;">}</div>
<div style="left:203px;top:583px;width:1600px;height:6px;background:#dcdcdc"></div>
<div style="left:208px;top:589px;width:1595px;height:172px;background:#f0f0f0;border-left:1px solid #a0a0a0;border-bottom:1px solid #a0a0a0;border-right:1px solid #a0a0a0;box-sizing:border-box"></div>
<div style="left:209px;top:589px;width:1593px;height:21px;background:linear-gradient(#bdbdbd,#cecece)"></div>
<div class="t" style="left:213.00px;top:592.77px;font-size:14px;line-height:14px;color:#000;font-weight:normal;font-family:'Liberation Serif', serif;transform:scaleX(0.8500);transform-origin:0 0;">Logs &amp; others</div>
<svg style="left:1783px;top:593px" width="10" height="10" viewBox="0 0 10 10"><path d="M1 1L9 9M9 1L1 9" stroke="#000" stroke-width="1.6"/></svg>
<div style="left:210px;top:610px;width:1591px;height:30px;background:#f0f0f0"></div>
<div style="left:231px;top:613px;width:1548px;height:1px;background:#e4e4e4"></div>
<div style="left:211px;top:613px;width:20px;height:19px;background:#f0f0f0;border:1px solid #d0d0d0;box-sizing:border-box"></div>
<svg style="left:217px;top:618px" width="6" height="9" viewBox="0 0 6 9"><path d="M5 0L0 4.5L5 9Z" fill="#555"/></svg>
<div style="left:1780px;top:613px;width:19px;height:19px;background:linear-gradient(#f6f6f6,#e2e2e2);border:1px solid #a8a8a8;box-sizing:border-box"></div>
<svg style="left:1787px;top:617px" width="6" height="9" viewBox="0 0 6 9"><path d="M0 0L5.5 4.5L0 9Z" fill="#000"/></svg>
<div style="left:210px;top:638px;width:1591px;height:121px;background:#f9f9f9"></div>
<div style="left:215px;top:640px;width:1581px;height:114px;background:#fff;border:1px solid #a0a0a8;box-sizing:border-box"></div>
<div style="left:624px;top:612px;width:127px;height:28px;background:#fafafa;border-left:1px solid #dadada;border-right:1px solid #dadada;box-sizing:border-box"></div>
<svg style="left:240px;top:617px" width="15" height="19" viewBox="0 0 15 19"><path d="M0.5 0.5H11L14.5 4V18.5H0.5Z" fill="#eeeef8" stroke="#a8a8c8" stroke-width="0.9"/><path d="M3.5 13.5L11.5 2.2L14 4L6 15.3Z" fill="#f6a624" stroke="#c06a10" stroke-width="0.6"/><path d="M3.5 13.5L3 16.2L6 15.3Z" fill="#3a3a3a"/></svg>
<div class="t" style="left:260.60px;top:618.99px;font-size:15.6px;line-height:15.6px;color:#000;font-weight:normal;font-family:'Liberation Sans', sans-serif;transform:scaleX(0.9326);transform-origin:0 0;">Code::Blocks</div>
<div class="t" style="left:356.70px;top:615.94px;font-size:18.5px;line-height:18.5px;color:#7c7c7c;font-weight:bold;font-family:'Liberation Sans', sans-serif;transform:scaleX(1.0545);transform-origin:0 0;">x</div>
<div style="left:377px;top:614px;width:1px;height:24px;background:#dedede"></div>
<svg style="left:385px;top:617px" width="20" height="19" viewBox="0 0 20 19"><path d="M11 11L18 17.5" stroke="#8a7018" stroke-width="4" stroke-linecap="round"/><path d="M11 11L18 17.5" stroke="#c8a838" stroke-width="2.2" stroke-linecap="round"/><circle cx="7.8" cy="7.8" r="7" fill="#c8e4f4" stroke="#6aa8c8" stroke-width="0.9"/><ellipse cx="6.3" cy="5.3" rx="3.3" ry="2.3" fill="#eaf6fc"/></svg>
<div class="t" style="left:407.60px;top:618.99px;font-size:15.6px;line-height:15.6px;color:#000;font-weight:normal;font-family:'Liberation Sans', sans-serif;transform:scaleX(0.9640);transform-origin:0 0;">Search results</div>
<div class="t" style="left:513.70px;top:615.94px;font-size:18.5px;line-height:18.5px;color:#7c7c7c;font-weight:bold;font-family:'Liberation Sans', sans-serif;transform:scaleX(1.0545);transform-origin:0 0;">x</div>
<div style="left:534px;top:614px;width:1px;height:24px;background:#dedede"></div>
<svg style="left:543.5px;top:617px" width="15" height="19" viewBox="0 0 15 19"><path d="M0.5 0.5H11L14.5 4V18.5H0.5Z" fill="#eeeef8" stroke="#a8a8c8" stroke-width="0.9"/><path d="M3.5 13.5L11.5 2.2L14 4L6 15.3Z" fill="#f6a624" stroke="#c06a10" stroke-width="0.6"/><path d="M3.5 13.5L3 16.2L6 15.3Z" fill="#3a3a3a"/></svg>
<div class="t" style="left:564.40px;top:618.99px;font-size:15.6px;line-height:15.6px;color:#000;font-weight:normal;font-family:'Liberation Sans', sans-serif;transform:scaleX(0.8657);transform-origin:0 0;">Cccc</div>
<div class="t" style="left:604.70px;top:615.94px;font-size:18.5px;line-height:18.5px;color:#7c7c7c;font-weight:bold;font-family:'Liberation Sans', sans-serif;transform:scaleX(1.0545);transform-origin:0 0;">x</div>
<svg style="left:633px;top:615px" width="20" height="20" viewBox="0 0 20 20"><polygon points="19.70,10.00 19.51,11.89 16.45,12.67 15.81,13.88 16.86,16.86 15.39,18.07 12.67,16.45 11.36,16.85 10.00,19.70 8.11,19.51 7.33,16.45 6.12,15.81 3.14,16.86 1.93,15.39 3.55,12.67 3.15,11.36 0.30,10.00 0.49,8.11 3.55,7.33 4.19,6.12 3.14,3.14 4.61,1.93 7.33,3.55 8.64,3.15 10.00,0.30 11.89,0.49 12.67,3.55 13.88,4.19 16.86,3.14 18.07,4.61 16.45,7.33 16.85,8.64" fill="#1a6ef0" stroke="#1050c0" stroke-width="0.6"/><circle cx="10.0" cy="10.0" r="4.00" fill="#fff"/></svg>
<div class="t" style="left:656.00px;top:616.99px;font-size:15.6px;line-height:15.6px;color:#000;font-weight:normal;font-family:'Liberation Sans', sans-serif;transform:scaleX(1.0233);transform-origin:0 0;">Build log</div>
<div class="t" style="left:729.30px;top:613.94px;font-size:18.5px;line-height:18.5px;color:#7c7c7c;font-weight:bold;font-family:'Liberation Sans', sans-serif;transform:scaleX(1.0545);transform-origin:0 0;">x</div>
<svg style="left:757px;top:617px" width="17" height="19" viewBox="0 0 17 19"><path d="M4 18.5L1 9" stroke="#b8901a" stroke-width="2.2"/><path d="M1 9Q2 2 9 0.8L16 6Q10 6 9 12Q5 9 1 9Z" fill="#e0302a" stroke="#b02018" stroke-width="0.6"/></svg>
<div class="t" style="left:778.30px;top:618.99px;font-size:15.6px;line-height:15.6px;color:#000;font-weight:normal;font-family:'Liberation Sans', sans-serif;transform:scaleX(0.9836);transform-origin:0 0;">Build messages</div>
<div class="t" style="left:896.70px;top:615.94px;font-size:18.5px;line-height:18.5px;color:#7c7c7c;font-weight:bold;font-family:'Liberation Sans', sans-serif;transform:scaleX(1.0545);transform-origin:0 0;">x</div>
<div style="left:917px;top:614px;width:1px;height:24px;background:#dedede"></div>
<svg style="left:927px;top:617px" width="15" height="19" viewBox="0 0 15 19"><path d="M0.5 0.5H11L14.5 4V18.5H0.5Z" fill="#eeeef8" stroke="#a8a8c8" stroke-width="0.9"/><path d="M3.5 13.5L11.5 2.2L14 4L6 15.3Z" fill="#f6a624" stroke="#c06a10" stroke-width="0.6"/><path d="M3.5 13.5L3 16.2L6 15.3Z" fill="#3a3a3a"/></svg>
<div class="t" style="left:946.80px;top:618.99px;font-size:15.6px;line-height:15.6px;color:#000;font-weight:normal;font-family:'Liberation Sans', sans-serif;transform:scaleX(1.0142);transform-origin:0 0;">CppCheck/Vera++</div>
<div class="t" style="left:1086.70px;top:615.94px;font-size:18.5px;line-height:18.5px;color:#7c7c7c;font-weight:bold;font-family:'Liberation Sans', sans-serif;transform:scaleX(1.0545);transform-origin:0 0;">x</div>
<div style="left:1107px;top:614px;width:1px;height:24px;background:#dedede"></div>
<svg style="left:1117px;top:617px" width="15" height="19" viewBox="0 0 15 19"><path d="M0.5 0.5H11L14.5 4V18.5H0.5Z" fill="#eeeef8" stroke="#a8a8c8" stroke-width="0.9"/><path d="M3.5 13.5L11.5 2.2L14 4L6 15.3Z" fill="#f6a624" stroke="#c06a10" stroke-width="0.6"/><path d="M3.5 13.5L3 16.2L6 15.3Z" fill="#3a3a3a"/></svg>
<div class="t" style="left:1137.30px;top:618.99px;font-size:15.6px;line-height:15.6px;color:#000;font-weight:normal;font-family:'Liberation Sans', sans-serif;transform:scaleX(0.9966);transform-origin:0 0;">CppCheck/Vera++ messages</div>
<div class="t" style="left:1349.70px;top:615.94px;font-size:18.5px;line-height:18.5px;color:#7c7c7c;font-weight:bold;font-family:'Liberation Sans', sans-serif;transform:scaleX(1.0545);transform-origin:0 0;">x</div>
<div style="left:1371px;top:614px;width:1px;height:24px;background:#dedede"></div>
<svg style="left:1380px;top:617px" width="15" height="19" viewBox="0 0 15 19"><path d="M0.5 0.5H11L14.5 4V18.5H0.5Z" fill="#eeeef8" stroke="#a8a8c8" stroke-width="0.9"/><path d="M3.5 13.5L11.5 2.2L14 4L6 15.3Z" fill="#f6a624" stroke="#c06a10" stroke-width="0.6"/><path d="M3.5 13.5L3 16.2L6 15.3Z" fill="#3a3a3a"/></svg>
<div class="t" style="left:1400.30px;top:618.99px;font-size:15.6px;line-height:15.6px;color:#000;font-weight:normal;font-family:'Liberation Sans', sans-serif;transform:scaleX(0.9321);transform-origin:0 0;">Cscope</div>
<div class="t" style="left:1459.70px;top:615.94px;font-size:18.5px;line-height:18.5px;color:#7c7c7c;font-weight:bold;font-family:'Liberation Sans', sans-serif;transform:scaleX(1.0545);transform-origin:0 0;">x</div>
<div style="left:1480px;top:614px;width:1px;height:24px;background:#dedede"></div>
<svg style="left:1488px;top:617px" width="20" height="20" viewBox="0 0 20 20"><polygon points="19.70,10.00 19.51,11.89 16.45,12.67 15.81,13.88 16.86,16.86 15.39,18.07 12.67,16.45 11.36,16.85 10.00,19.70 8.11,19.51 7.33,16.45 6.12,15.81 3.14,16.86 1.93,15.39 3.55,12.67 3.15,11.36 0.30,10.00 0.49,8.11 3.55,7.33 4.19,6.12 3.14,3.14 4.61,1.93 7.33,3.55 8.64,3.15 10.00,0.30 11.89,0.49 12.67,3.55 13.88,4.19 16.86,3.14 18.07,4.61 16.45,7.33 16.85,8.64" fill="#1a6ef0" stroke="#1050c0" stroke-width="0.6"/><circle cx="10.0" cy="10.0" r="4.00" fill="#fff"/></svg>
<div class="t" style="left:1510.50px;top:618.99px;font-size:15.6px;line-height:15.6px;color:#000;font-weight:normal;font-family:'Liberation Sans', sans-serif;transform:scaleX(1.0116);transform-origin:0 0;">Debugger</div>
<div class="t" style="left:1590.70px;top:615.94px;font-size:18.5px;line-height:18.5px;color:#7c7c7c;font-weight:bold;font-family:'Liberation Sans', sans-serif;transform:scaleX(1.0545);transform-origin:0 0;">x</div>
<div style="left:1611px;top:614px;width:1px;height:24px;background:#dedede"></div>
<svg style="left:1620.5px;top:617px" width="15" height="19" viewBox="0 0 15 19"><path d="M0.5 0.5H11L14.5 4V18.5H0.5Z" fill="#eeeef8" stroke="#a8a8c8" stroke-width="0.9"/><path d="M3.5 13.5L11.5 2.2L14 4L6 15.3Z" fill="#f6a624" stroke="#c06a10" stroke-width="0.6"/><path d="M3.5 13.5L3 16.2L6 15.3Z" fill="#3a3a3a"/></svg>
<div class="t" style="left:1641.00px;top:618.99px;font-size:15.6px;line-height:15.6px;color:#000;font-weight:normal;font-family:'Liberation Sans', sans-serif;transform:scaleX(0.9512);transform-origin:0 0;">DoxyBlocks</div>
<div class="t" style="left:1729.70px;top:615.94px;font-size:18.5px;line-height:18.5px;color:#7c7c7c;font-weight:bold;font-family:'Liberation Sans', sans-serif;transform:scaleX(1.0545);transform-origin:0 0;">x</div>
<div style="left:1750px;top:614px;width:1px;height:24px;background:#dedede"></div>
<svg style="left:1759px;top:617px" width="16" height="19" viewBox="0 0 16 19"><path d="M0.5 0.5H11L15.5 5V18.5H0.5Z" fill="#eeeef8" stroke="#a8a8c8" stroke-width="0.9"/><path d="M5 5H11.5M5 5V18M5 11H10.5" stroke="#2a32c0" stroke-width="1.4" fill="none"/></svg>
<div style="left:1px;top:761px;width:1802px;height:36px;background:#f0f0f0"></div>
<div style="left:1px;top:760px;width:1802px;height:1px;background:#a0a0a0"></div>
<div class="t" style="left:4.00px;top:771.79px;font-size:15.6px;line-height:15.6px;color:#000;font-weight:normal;font-family:'Liberation Sans', sans-serif;transform:scaleX(1.0047);transform-origin:0 0;">Build and run the active project</div>
<div style="left:655px;top:764px;width:131px;height:30px;background:#fff;border:1px solid #d4d4d4;border-radius:3px;box-sizing:border-box"></div>
<div class="t" style="left:657.50px;top:771.79px;font-size:15.6px;line-height:15.6px;color:#000;font-weight:normal;font-family:'Liberation Sans', sans-serif;transform:scaleX(1.0289);transform-origin:0 0;">C/C++</div>
<div style="left:653px;top:763px;width:1px;height:31px;background:#dadada"></div>
<div style="left:787px;top:763px;width:1px;height:31px;background:#dadada"></div>
<div style="left:932px;top:763px;width:1px;height:31px;background:#dadada"></div>
<div style="left:1070px;top:763px;width:1px;height:31px;background:#dadada"></div>
<div style="left:1317px;top:763px;width:1px;height:31px;background:#dadada"></div>
<div style="left:1404px;top:763px;width:1px;height:31px;background:#dadada"></div>
<div style="left:1487px;top:763px;width:1px;height:31px;background:#dadada"></div>
<div style="left:1583px;top:763px;width:1px;height:31px;background:#dadada"></div>
<div style="left:1713px;top:763px;width:1px;height:31px;background:#dadada"></div>
<div class="t" style="left:792.00px;top:771.79px;font-size:15.6px;line-height:15.6px;color:#000;font-weight:normal;font-family:'Liberation Sans', sans-serif;transform:scaleX(1.0000);transform-origin:0 0;">Windows (CR+LF)</div>
<div class="t" style="left:937.50px;top:771.79px;font-size:15.6px;line-height:15.6px;color:#000;font-weight:normal;font-family:'Liberation Sans', sans-serif;transform:scaleX(1.0000);transform-origin:0 0;">WINDOWS-950</div>
<div class="t" style="left:1075.00px;top:771.79px;font-size:15.6px;line-height:15.6px;color:#000;font-weight:normal;font-family:'Liberation Sans', sans-serif;transform:scaleX(0.9517);transform-origin:0 0;">Line 4, Col 1, Pos 45</div>
<div class="t" style="left:1322.60px;top:771.79px;font-size:15.6px;line-height:15.6px;color:#000;font-weight:normal;font-family:'Liberation Sans', sans-serif;transform:scaleX(0.9600);transform-origin:0 0;">Insert</div>
<div class="t" style="left:1490.00px;top:771.79px;font-size:15.6px;line-height:15.6px;color:#000;font-weight:normal;font-family:'Liberation Sans', sans-serif;transform:scaleX(1.0256);transform-origin:0 0;">Read/Write</div>
<div class="t" style="left:1587.00px;top:771.79px;font-size:15.6px;line-height:15.6px;color:#000;font-weight:normal;font-family:'Liberation Sans', sans-serif;transform:scaleX(1.0426);transform-origin:0 0;">default</div>
<svg style="left:1735px;top:769px" width="26" height="17" viewBox="0 0 26 17"><rect width="27" height="17" fill="#fff"/><rect y="0.00" width="27" height="1.31" fill="#e0202a"/><rect y="2.43" width="27" height="1.31" fill="#e0202a"/><rect y="4.86" width="27" height="1.31" fill="#e0202a"/><rect y="7.29" width="27" height="1.31" fill="#e0202a"/><rect y="9.71" width="27" height="1.31" fill="#e0202a"/><rect y="12.14" width="27" height="1.31" fill="#e0202a"/><rect y="14.57" width="27" height="1.31" fill="#e0202a"/><rect width="12" height="9" fill="#2a3aa8"/></svg>
<svg style="left:18px;top:67px" width="19" height="20" viewBox="0 0 19 20"><path d="M0.5 0.5H10.5L14.5 4.5V19.5H0.5Z" fill="#eff0f8" stroke="#b8b8d0"/><path d="M10.5 0.5V4.5H14.5" fill="#d0d0e0"/><path d="M12 1.5h2.8v2.9h2.9v2.8h-2.9v2.9H12V7.2H9.1V4.4H12Z" fill="#f0ec78" stroke="#a8a020" stroke-width="0.8"/></svg>
<svg style="left:43px;top:69px" width="20" height="16" viewBox="0 0 20 16"><path d="M4 15V2Q4 0.5 5.5 0.5H12L15.5 4V13Z" fill="#f2f2f6" stroke="#7a7a80" stroke-width="0.8"/><path d="M0.5 3.5Q0.5 2 2 2H4V14L0.5 15.5Z" fill="#6aaef0" stroke="#2a70c8" stroke-width="0.8"/><path d="M15.5 4.5H17V11L15.5 12Z" fill="#4a90e0"/><path d="M0.8 15.5L6 9.5H11L12.5 11H19.5L16.5 15.5Z" fill="#5aa4ee" stroke="#2a6cc0" stroke-width="0.8"/></svg>
<svg style="left:70px;top:69px" width="19" height="18" viewBox="0 0 19 18"><path d="M0.5 1.5Q0.5 0.5 1.5 0.5H14.5L18.5 4.5V16.5Q18.5 17.5 17.5 17.5H1.5Q0.5 17.5 0.5 16.5Z" fill="#7c7c7c" stroke="#4e4e4e" stroke-width="0.9"/><rect x="5.5" y="0.8" width="8.5" height="5" fill="#f0f0f0" stroke="#555" stroke-width="0.6"/><rect x="3.5" y="9.6" width="12" height="8" fill="#e8e8e8" stroke="#555" stroke-width="0.6"/><rect x="6" y="11.5" width="7" height="4.5" fill="#8a8a8a"/></svg>
<svg style="left:97px;top:67px" width="20" height="20" viewBox="0 0 20 20"><g stroke="#34507e" stroke-width="0.8"><path d="M6.5 0.5H18L19.5 2V13.5H6.5Z" fill="#7a90b8"/><path d="M3.5 3.5H15L16.5 5V16.5H3.5Z" fill="#7a90b8"/><path d="M0.5 6.5H12L13.5 8V19.5H0.5Z" fill="#6e86b0"/></g><rect x="9" y="1" width="6" height="3" fill="#f4f4f4"/><rect x="6" y="4" width="6" height="3" fill="#f4f4f4"/><rect x="3.5" y="7.2" width="6" height="3.5" fill="#f4f4f4"/><rect x="2.5" y="12.5" width="9" height="6.5" fill="#dfe6f0"/><rect x="3.8" y="14" width="6.5" height="3.5" fill="#de5d64"/></svg>
<svg style="left:133px;top:70px" width="18" height="16" viewBox="0 0 18 16"><path d="M0.8 7L5.5 0.8L10.2 7H7.3V10.5Q7.3 11.6 8.4 11.6H16Q17.2 11.6 17.2 12.8V14.2Q17.2 15.3 16 15.3H6Q3.7 15.3 3.7 13V7Z" fill="#9a9a9a" stroke="#6c6c6c" stroke-width="0.9" stroke-linejoin="round"/></svg>
<svg style="left:161px;top:70px" width="18" height="17" viewBox="0 0 18 17"><path d="M0.8 1.2Q0.8 0.5 1.5 0.5H11.5Q13.8 0.5 13.8 2.8V9H16.7L12 15.6L7.3 9H10.2V4.5Q10.2 4 9.6 4H1.5Q0.8 4 0.8 3.3Z" fill="#9a9a9a" stroke="#6c6c6c" stroke-width="0.9" stroke-linejoin="round"/></svg>
<svg style="left:196px;top:67px" width="17" height="20" viewBox="0 0 17 20"><path d="M3.4 0.6Q0 2 0.6 5Q1.5 9 4.5 11.2H11.3Q14.3 9 15.2 5Q15.8 2 12.4 0.6L8.8 8.3Q7.9 9.3 7 8.3Z" fill="#fafafa" stroke="#5e5e5e" stroke-width="1.1" stroke-linejoin="round"/><g fill="#f4f4f4" stroke="#6a6a6a" stroke-width="1.2"><ellipse cx="4.2" cy="15.3" rx="2.5" ry="2.9"/><ellipse cx="11.6" cy="15.3" rx="2.5" ry="2.9"/></g><g fill="none" stroke="#b8b8b8" stroke-width="0.7"><ellipse cx="4.2" cy="15.3" rx="1.3" ry="1.7"/><ellipse cx="11.6" cy="15.3" rx="1.3" ry="1.7"/></g></svg>
<svg style="left:223px;top:68px" width="17" height="18" viewBox="0 0 17 18"><path d="M0.5 0.5H8L10.5 3V14.5H0.5Z" fill="#d6d6d6" stroke="#6e6e6e" stroke-width="0.9"/><g stroke="#8a8a8a" stroke-width="0.9"><path d="M2 3.5H5M2 6H5M2 8.5H5M2 11H5"/></g><path d="M4.5 3.5H12L16 7.5V17.5H4.5Z" fill="#d8d8d8" stroke="#6e6e6e" stroke-width="0.9"/><g stroke="#6a6a6a" stroke-width="1.1"><path d="M6.5 6.5H11M6.5 9H14M6.5 11.5H14M6.5 14H14"/></g></svg>
<svg style="left:249px;top:67px" width="19" height="20" viewBox="0 0 19 20"><rect x="0.5" y="2.5" width="13" height="15" rx="1" fill="#c8c8c8" stroke="#8a8a8a" stroke-width="0.8"/><rect x="4" y="0.8" width="6" height="3" rx="1.2" fill="#b0b0b0" stroke="#8a8a8a" stroke-width="0.7"/><path d="M9.5 9.5H15L18.5 13V19.5H9.5Z" fill="#dedede" stroke="#8a8a8a" stroke-width="0.8"/><rect x="11.5" y="14" width="5" height="4" fill="#8a8a8a"/></svg>
<svg style="left:283px;top:67px" width="21" height="20" viewBox="0 0 21 20"><path d="M11 11L18.5 18" stroke="#8a7018" stroke-width="4" stroke-linecap="round"/><path d="M11 11L18.5 18" stroke="#c8a838" stroke-width="2.2" stroke-linecap="round"/><circle cx="8" cy="8" r="7.3" fill="#c8e4f4" stroke="#6aa8c8" stroke-width="0.9"/><ellipse cx="6.5" cy="5.5" rx="3.5" ry="2.5" fill="#eaf6fc"/></svg>
<svg style="left:310px;top:67px" width="21" height="20" viewBox="0 0 21 20"><path d="M11 11L18.5 18" stroke="#8a7018" stroke-width="4" stroke-linecap="round"/><path d="M11 11L18.5 18" stroke="#c8a838" stroke-width="2.2" stroke-linecap="round"/><circle cx="8" cy="8" r="7.3" fill="#c8e4f4" stroke="#6aa8c8" stroke-width="0.9"/><text x="8" y="11.8" text-anchor="middle" font-family="Liberation Sans" font-weight="bold" font-size="10.5" fill="#e04050" stroke="#a02030" stroke-width="0.3">R</text></svg>
<svg style="left:351px;top:68px" width="19" height="19" viewBox="0 0 19 19"><polygon points="9.50,0.50 11.26,0.67 11.95,3.59 13.06,4.18 15.86,3.14 16.98,4.50 15.41,7.05 15.78,8.25 18.50,9.50 18.33,11.26 15.41,11.95 14.82,13.06 15.86,15.86 14.50,16.98 11.95,15.41 10.75,15.78 9.50,18.50 7.74,18.33 7.05,15.41 5.94,14.82 3.14,15.86 2.02,14.50 3.59,11.95 3.22,10.75 0.50,9.50 0.67,7.74 3.59,7.05 4.18,5.94 3.14,3.14 4.50,2.02 7.05,3.59 8.25,3.22" fill="#ecd84a" stroke="#a08e18" stroke-width="0.8" stroke-linejoin="round"/><circle cx="9.5" cy="9.5" r="2.6" fill="#f0f0f0" stroke="#a08e18" stroke-width="0.7"/></svg>
<svg style="left:379px;top:69px" width="16" height="17" viewBox="0 0 16 17"><defs><linearGradient id="rg" x1="0" y1="0" x2="0" y2="1"><stop offset="0" stop-color="#7ad06a"/><stop offset="1" stop-color="#1e9a2a"/></linearGradient></defs><path d="M0.5 0.5L15.5 8.5L0.5 16.5Z" fill="url(#rg)" stroke="#2a8a2a" stroke-width="0.8"/></svg>
<svg style="left:405px;top:68px" width="19" height="18" viewBox="0 0 19 18"><polygon points="7.40,0.80 8.67,0.92 9.16,3.05 9.96,3.48 12.00,2.70 12.80,3.69 11.65,5.54 11.91,6.40 13.90,7.30 13.78,8.57 11.65,9.06 11.22,9.86 12.00,11.90 11.01,12.70 9.16,11.55 8.30,11.81 7.40,13.80 6.13,13.68 5.64,11.55 4.84,11.12 2.80,11.90 2.00,10.91 3.15,9.06 2.89,8.20 0.90,7.30 1.02,6.03 3.15,5.54 3.58,4.74 2.80,2.70 3.79,1.90 5.64,3.05 6.50,2.79" fill="#ecd84a" stroke="#a08e18" stroke-width="0.8" stroke-linejoin="round"/><circle cx="7.4" cy="7.3" r="2.1" fill="#e5f1fb" stroke="#a08e18" stroke-width="0.7"/><path d="M7 7.6L17.8 12.3L7 17Z" fill="url(#rg)" stroke="#2a8a2a" stroke-width="0.8"/></svg>
<svg style="left:427px;top:67px" width="25" height="20" viewBox="0 0 25 20"><defs><linearGradient id="bg2" x1="0" y1="0" x2="1" y2="1"><stop offset="0" stop-color="#a8ccf8"/><stop offset="1" stop-color="#3a8af0"/></linearGradient></defs><g fill="url(#bg2)" stroke="#2060c0" stroke-width="0.9" stroke-linejoin="round"><path d="M11.2 2.2H19.8Q21.7 2.2 21.7 4.2V9.5H23.9L19.7 14L15.5 9.5H17.9V5.8H11.2Z"/><path d="M16.3 17.5H8Q6.1 17.5 6.1 15.5V10.5H3.9L8.1 6L12.3 10.5H9.9V13.9H16.3Z"/></g></svg>
<svg style="left:460px;top:69px" width="17" height="17" viewBox="0 0 17 17"><rect x="0.5" y="0.5" width="16" height="16" rx="3" fill="#5c5c5c" stroke="#3a3a3a" stroke-width="0.8"/><path d="M4.8 4.8L12.2 12.2M12.2 4.8L4.8 12.2" stroke="#fff" stroke-width="2.6"/></svg>
<svg style="left:660px;top:68px" width="19" height="19" viewBox="0 0 19 19"><path d="M0.5 0.5H13.5V17.5H0.5Z" fill="#f4f4f4" stroke="#7a7a7a" stroke-width="0.8"/><g stroke="#8a8a8a" stroke-width="1"><path d="M2.5 3.5H4M5.5 3.5H12M2.5 6.5H4M5.5 6.5H12M2.5 9.5H4M5.5 9.5H12M2.5 12.5H4M5.5 12.5H9"/></g><polygon points="14.00,9.00 14.98,9.10 15.34,10.77 15.94,11.09 17.54,10.46 18.16,11.22 17.23,12.66 17.43,13.32 19.00,14.00 18.90,14.98 17.23,15.34 16.91,15.94 17.54,17.54 16.78,18.16 15.34,17.23 14.68,17.43 14.00,19.00 13.02,18.90 12.66,17.23 12.06,16.91 10.46,17.54 9.84,16.78 10.77,15.34 10.57,14.68 9.00,14.00 9.10,13.02 10.77,12.66 11.09,12.06 10.46,10.46 11.22,9.84 12.66,10.77 13.32,10.57" fill="#e0c838" stroke="#988a18" stroke-width="0.8" stroke-linejoin="round"/><circle cx="14" cy="14" r="1.4" fill="#f0f0f0" stroke="#988a18" stroke-width="0.7"/></svg>
<svg style="left:700px;top:70px" width="15" height="15" viewBox="0 0 15 15"><defs><linearGradient id="dg" x1="0" y1="0" x2="0" y2="1"><stop offset="0" stop-color="#f27a7a"/><stop offset="1" stop-color="#d2202a"/></linearGradient></defs><path d="M0.5 0.5L14.5 7.5L0.5 14.5Z" fill="url(#dg)" stroke="#b01820" stroke-width="0.7"/></svg>
<svg style="left:724px;top:68px" width="22" height="19" viewBox="0 0 22 19"><path d="M1 1.5Q1 0.5 2.5 0.5Q4 0.5 4 1.5V7.5Q4 8.5 5 8.5H7.5V5.5L12.3 9.5L7.5 13.5V11H3.5Q1 11 1 8.5Z" fill="#f8c060" stroke="#d08a20" stroke-width="0.8" stroke-linejoin="round"/><rect x="13.5" y="0.8" width="6.5" height="4.2" rx="1" fill="#9a9a9a" stroke="#3a3a3a" stroke-width="0.8"/><rect x="14" y="6.8" width="6" height="4.2" rx="1" fill="#8090f0" stroke="#3a3a3a" stroke-width="0.8"/><rect x="13.5" y="12.8" width="6.5" height="4.2" rx="1" fill="#9a9a9a" stroke="#3a3a3a" stroke-width="0.8"/></svg>
<svg style="left:754px;top:69px" width="18" height="18" viewBox="0 0 18 18"><path d="M10 0.5H3.5Q0.5 0.5 0.5 4V9.5Q0.5 12.5 3.5 12.5H7V10L12 14L7 18V15.5H3Q-1 15 0.5 10Z" fill="#d6d6d6" stroke="#7a7a7a" stroke-width="0.8" stroke-linejoin="round"/><path d="M8.5 0.5Q10 0.5 10 1.5V3Q10 4 8.5 4H5Q3.8 4 3.8 5.2V8Q3.8 9.2 5 9.2H7" fill="none" stroke="#7a7a7a" stroke-width="0.8"/><rect x="10.5" y="5.2" width="6.5" height="4.2" rx="1" fill="#9a9a9a" stroke="#3a3a3a" stroke-width="0.8"/></svg>
<svg style="left:780px;top:68px" width="18" height="19" viewBox="0 0 18 19"><path d="M1 1.5Q1 0.5 2.5 0.5Q4 0.5 4 1.5V7.5Q4 8.5 5 8.5H7.5V5.5L12.3 9.5L7.5 13.5V11H3.5Q1 11 1 8.5Z" fill="#f8c060" stroke="#d08a20" stroke-width="0.8" stroke-linejoin="round"/><rect x="10.5" y="0.8" width="6.5" height="4.2" rx="1" fill="#9a9a9a" stroke="#3a3a3a" stroke-width="0.8"/><rect x="10.5" y="13.2" width="6.5" height="4.2" rx="1" fill="#9a9a9a" stroke="#3a3a3a" stroke-width="0.8"/></svg>
<svg style="left:806px;top:68px" width="19" height="19" viewBox="0 0 19 19"><path d="M4 9.5Q4 6.5 7 6.5H12.5Q14.5 6.5 14.5 8Q14.5 9.5 12.5 9.5H8Q7 9.5 7 11V13H9.5L5 18L0.5 13H3Z" fill="#d6d6d6" stroke="#7a7a7a" stroke-width="0.8" stroke-linejoin="round"/><rect x="11.5" y="0.8" width="6.5" height="4.2" rx="1" fill="#9a9a9a" stroke="#3a3a3a" stroke-width="0.8"/><rect x="11.5" y="12" width="6.5" height="4.2" rx="1" fill="#9a9a9a" stroke="#3a3a3a" stroke-width="0.8"/></svg>
<svg style="left:834px;top:69px" width="19" height="17" viewBox="0 0 19 17"><path d="M9 0.5H4Q0.5 0.5 0.5 4V9Q0.5 12 3.5 12H7V9.5L11.5 12.8L7 16.5V14.5H3Q-0.5 14 0.5 9Z" fill="#d6d6d6" stroke="#7a7a7a" stroke-width="0.8" stroke-linejoin="round"/><path d="M9 0.5Q10 0.5 10 1.5V2.6Q10 3.6 9 3.6H5Q3.5 3.6 3.5 5V8Q3.5 9 5 9H7" fill="none" stroke="#7a7a7a" stroke-width="0.8"/><circle cx="15" cy="3.2" r="1.9" fill="#9a9a9a" stroke="#555" stroke-width="0.7"/><circle cx="15" cy="12" r="1.9" fill="#9a9a9a" stroke="#555" stroke-width="0.7"/></svg>
<svg style="left:861px;top:68px" width="18" height="19" viewBox="0 0 18 19"><path d="M1 1.5Q1 0.5 2.5 0.5Q4 0.5 4 1.5V7.5Q4 8.5 5 8.5H7.5V5.5L12.3 9.5L7.5 13.5V11H3.5Q1 11 1 8.5Z" fill="#d6d6d6" stroke="#7a7a7a" stroke-width="0.8" stroke-linejoin="round"/><circle cx="14.5" cy="3.8" r="1.9" fill="#9a9a9a" stroke="#555" stroke-width="0.7"/><circle cx="14.5" cy="15.6" r="1.9" fill="#9a9a9a" stroke="#555" stroke-width="0.7"/></svg>
<svg style="left:890px;top:69px" width="15" height="15" viewBox="0 0 15 15"><defs><linearGradient id="pg" x1="0" y1="0" x2="1" y2="0"><stop offset="0" stop-color="#5a5a5a"/><stop offset="0.5" stop-color="#9a9a9a"/><stop offset="1" stop-color="#5a5a5a"/></linearGradient></defs><rect x="0.7" y="0.5" width="5" height="13.5" fill="url(#pg)" stroke="#444" stroke-width="0.6"/><rect x="8.7" y="0.5" width="5" height="13.5" fill="url(#pg)" stroke="#444" stroke-width="0.6"/></svg>
<svg style="left:916px;top:69px" width="17" height="17" viewBox="0 0 17 17"><rect x="0.5" y="0.5" width="16" height="16" rx="3" fill="#5c5c5c" stroke="#3a3a3a" stroke-width="0.8"/><path d="M4.5 4.5L12.5 12.5M12.5 4.5L4.5 12.5" stroke="#fff" stroke-width="2.6"/></svg>
<svg style="left:949px;top:67px" width="21" height="20" viewBox="0 0 21 20"><rect x="0.5" y="0.5" width="19" height="17" fill="#eaeaea" stroke="#3a6ad8" stroke-width="1"/><rect x="1" y="1" width="18" height="4" fill="#2a5ef0"/><ellipse cx="9.5" cy="10.5" rx="3.2" ry="4" fill="#e8903a" transform="rotate(-35 9.5 10.5)"/><path d="M6 5.5L8 8M4 9.5H7M5 14L7.5 12.5M14 8L11.5 9M14 12.5L12 12M10 16L10.5 14" stroke="#777" stroke-width="0.8"/><path d="M12 18H17L14.5 20Z" fill="#222"/></svg>
<svg style="left:976px;top:67px" width="21" height="20" viewBox="0 0 21 20"><rect x="0.5" y="0.5" width="19" height="17" fill="#eaeaea" stroke="#555" stroke-width="1"/><rect x="1" y="1" width="18" height="4" fill="#5a5a5a"/><path d="M12.5 5L8 14.5" stroke="#333" stroke-width="2.2"/><path d="M12 18H17L14.5 20Z" fill="#222"/></svg>
<svg style="left:977px;top:103px" width="17" height="12" viewBox="0 0 17 12"><defs><linearGradient id="ag" x1="0" y1="0" x2="0" y2="1"><stop offset="0" stop-color="#c4c4c4"/><stop offset="1" stop-color="#8a8a8a"/></linearGradient></defs><path d="M0.6 5.8L6 0.6V3.3H16.2V8.3H6V11Z" fill="url(#ag)" stroke="#6a6a6a" stroke-width="0.8" stroke-linejoin="round"/></svg>
<svg style="left:1003px;top:103px" width="17" height="12" viewBox="0 0 17 12"><path d="M16.4 5.8L11 0.6V3.3H0.8V8.3H11V11Z" fill="url(#ag)" stroke="#6a6a6a" stroke-width="0.8" stroke-linejoin="round"/></svg>
<svg style="left:1039px;top:100px" width="14" height="17" viewBox="0 0 14 17"><rect x="0.5" y="0.5" width="1.6" height="16" fill="#c8a020"/><path d="M2.1 0.8Q5 2.5 8 1.2Q11 0 12.8 1.5V11Q10 9.5 7 11Q4.5 12.5 2.1 11Z" fill="#e8403a" stroke="#c02020" stroke-width="0.6"/></svg>
<svg style="left:1066px;top:100px" width="17" height="17" viewBox="0 0 17 17"><rect x="0.5" y="0.5" width="1.8" height="16" fill="#7a7a7a"/><path d="M2.3 0.8Q5 2.5 8 1.2Q11 0 12 1.5V11Q10 9.5 7 11Q4.5 12.5 2.3 11Z" fill="#8a8a8a" stroke="#666" stroke-width="0.6"/><path d="M3.5 9L8 5V7.2H16.3V11H8V13.2Z" fill="url(#ag)" stroke="#6a6a6a" stroke-width="0.8" stroke-linejoin="round"/></svg>
<svg style="left:1093px;top:100px" width="17" height="17" viewBox="0 0 17 17"><rect x="0.5" y="0.5" width="1.8" height="16" fill="#7a7a7a"/><path d="M2.3 0.8Q5 2.5 8 1.2Q11 0 12 1.5V11Q10 9.5 7 11Q4.5 12.5 2.3 11Z" fill="#8a8a8a" stroke="#666" stroke-width="0.6"/><path d="M16.5 9L12 5V7.2H3.7V11H12V13.2Z" fill="url(#ag)" stroke="#6a6a6a" stroke-width="0.8" stroke-linejoin="round"/></svg>
<svg style="left:1120px;top:100px" width="17" height="17" viewBox="0 0 17 17"><rect x="0.5" y="0.5" width="1.8" height="16" fill="#7a7a7a"/><path d="M2.3 0.8Q5 2.5 8 1.2Q11 0 12 1.5V11Q10 9.5 7 11Q4.5 12.5 2.3 11Z" fill="#8a8a8a" stroke="#666" stroke-width="0.6"/><path d="M5.5 7.5L15.5 16M15.5 7.5L5.5 16" stroke="#3a3a3a" stroke-width="1.8"/></svg>
<svg style="left:1158px;top:100px" width="17" height="13" viewBox="0 0 17 13"><text x="8.3" y="9.5" text-anchor="middle" font-family="Liberation Sans" font-weight="bold" font-size="10.5" fill="#5a9ae8" stroke="#3a7ad0" stroke-width="0.4" textLength="15" lengthAdjust="spacingAndGlyphs">dox</text><rect x="0.5" y="11" width="16" height="1.6" fill="#3a7ad0"/></svg>
<svg style="left:1183px;top:100px" width="14" height="13" viewBox="0 0 14 13"><rect x="0" y="0" width="5" height="5" fill="#e86a6a"/><rect x="5" y="0" width="5" height="5" fill="#5ab85a"/><rect x="0" y="5" width="5" height="5" fill="#e8e07a"/><rect x="5" y="5" width="5" height="5" fill="#6a6ad8"/><path d="M5.5 4.5L13.5 8.5L5.5 12.5Z" fill="#2eaa2e" stroke="#1a8a1a" stroke-width="0.5"/></svg>
<svg style="left:1211px;top:100px" width="18" height="12" viewBox="0 0 18 12"><text x="0" y="11" font-family="Liberation Sans" font-size="13" fill="#222" textLength="17" lengthAdjust="spacingAndGlyphs">/**</text></svg>
<svg style="left:1234px;top:100px" width="18" height="12" viewBox="0 0 18 12"><text x="0" y="11.5" font-family="Liberation Sans" font-size="13" fill="#222" textLength="17" lengthAdjust="spacingAndGlyphs">*&lt;</text></svg>
<svg style="left:1265px;top:99px" width="17" height="16" viewBox="0 0 17 16"><rect x="0.5" y="0.5" width="15.5" height="14.5" fill="#e4e4e4" stroke="#c0c0c0" stroke-width="0.8"/><circle cx="8.2" cy="7.7" r="4.8" fill="#1a6ae0"/><path d="M6 4.5Q9 5.5 8 8Q7 10 9.5 11.5" stroke="#0a2a80" stroke-width="1.5" fill="none"/></svg>
<svg style="left:1289px;top:98px" width="17" height="16" viewBox="0 0 17 16"><rect x="0.5" y="0.5" width="15" height="14.5" fill="#ececec" stroke="#7a7a7a" stroke-width="0.9"/><text x="8" y="13" text-anchor="middle" font-family="Liberation Sans" font-weight="bold" font-size="13" fill="#f0e020" stroke="#5a5000" stroke-width="0.5">?</text></svg>
<svg style="left:1319px;top:97px" width="18" height="17" viewBox="0 0 18 17"><path d="M6.5 6.5L14.8 14.8" stroke="#6e6e6e" stroke-width="4" stroke-linecap="round"/><path d="M6.5 6.5L14.8 14.8" stroke="#f2f2f2" stroke-width="2.2" stroke-linecap="round"/><circle cx="5.2" cy="5.2" r="4.6" fill="#f2f2f2" stroke="#6e6e6e" stroke-width="1"/><path d="M-0.5 3L3 -0.5L6.8 3.3L3.3 6.8Z" fill="#f0f0f0"/><path d="M0.9 4.4L3.3 6.8L6.8 3.3L4.4 0.9" fill="none" stroke="#6e6e6e" stroke-width="1"/></svg>
<svg style="left:1357px;top:99px" width="19" height="18" viewBox="0 0 19 18"><defs><linearGradient id="ag" x1="0" y1="0" x2="0" y2="1"><stop offset="0" stop-color="#c4c4c4"/><stop offset="1" stop-color="#8a8a8a"/></linearGradient></defs><path d="M0.6 9L6.5 3.8V6.6H13V11.4H6.5V14.2Z" fill="url(#ag)" stroke="#6a6a6a" stroke-width="0.8" stroke-linejoin="round"/><rect x="13.3" y="0.5" width="3.4" height="17" fill="#a0a0a0" stroke="#666" stroke-width="0.7"/></svg>
<svg style="left:1386px;top:101px" width="14" height="14" viewBox="0 0 14 14"><circle cx="7" cy="7" r="5.9" fill="#a0a0a0" stroke="#6a6a6a" stroke-width="0.8"/></svg>
<svg style="left:1411px;top:99px" width="19" height="18" viewBox="0 0 19 18"><path d="M18.4 9L12.5 3.8V6.6H6V11.4H12.5V14.2Z" fill="url(#ag)" stroke="#6a6a6a" stroke-width="0.8" stroke-linejoin="round"/><rect x="0.5" y="0.5" width="3.4" height="17" fill="#a0a0a0" stroke="#666" stroke-width="0.7"/></svg>
<svg style="left:1450px;top:100px" width="20" height="16" viewBox="0 0 20 16"><path d="M2.5 0.5H13.5L19 8L13.5 15.5H2.5Q0.5 15.5 0.5 13.5V2.5Q0.5 0.5 2.5 0.5Z" fill="#555" stroke="#3a3a3a" stroke-width="0.7"/><path d="M4.5 4L11 11.5M11 4L4.5 11.5" stroke="#fff" stroke-width="2.6"/></svg>
<svg style="left:1648px;top:103px" width="18" height="12" viewBox="0 0 18 12"><path d="M0.6 5.8L6.2 0.6V3.3H17V8.3H6.2V11Z" fill="url(#ag)" stroke="#6a6a6a" stroke-width="0.8" stroke-linejoin="round"/></svg>
<svg style="left:1676px;top:103px" width="18" height="12" viewBox="0 0 18 12"><path d="M17.4 5.8L11.8 0.6V3.3H1V8.3H11.8V11Z" fill="url(#ag)" stroke="#6a6a6a" stroke-width="0.8" stroke-linejoin="round"/></svg>
<svg style="left:1703px;top:99px" width="18" height="20" viewBox="0 0 18 20"><path d="M3.5 13L12.5 0.8L15.5 3L7 15.2Z" fill="#f0e040" stroke="#8a8010" stroke-width="0.8"/><path d="M3.5 13L3 15.5L7 15.2" fill="#333"/><rect x="0.5" y="15.8" width="16" height="3" fill="#e03a3a" stroke="#c02a2a" stroke-width="0.6"/></svg>
<svg style="left:1729px;top:99px" width="20" height="18" viewBox="0 0 20 18"><rect x="0.5" y="5.5" width="19" height="6" fill="#4a90e0" stroke="#2a6ac0" stroke-width="0.6"/><rect x="4" y="4" width="10" height="9" fill="#b0c8e0" stroke="#8a9ab0" stroke-width="0.7"/><path d="M11.5 1H16M13.8 1V16.5M11.5 16.5H16" stroke="#888" stroke-width="1.6"/></svg>
<svg style="left:1756px;top:100px" width="21" height="16" viewBox="0 0 21 16"><text x="10.5" y="13.8" text-anchor="middle" font-family="Liberation Sans" font-weight="bold" font-size="16" fill="#8ab8f0" stroke="#4a88d8" stroke-width="0.8" textLength="20" lengthAdjust="spacingAndGlyphs">Aa</text></svg>
<svg style="left:1784px;top:102px" width="15" height="15" viewBox="0 0 15 15"><circle cx="2" cy="12.8" r="1.6" fill="#1a4aa0"/><path d="M9.5 0.5L10.7 4.8L14.5 3L11.8 6.5L14.5 10L10.7 8.2L9.5 12.5L8.3 8.2L4.5 10L7.2 6.5L4.5 3L8.3 4.8Z" fill="#1a4aa0"/></svg>
<svg style="left:21px;top:135px" width="11" height="18" viewBox="0 0 11 18"><path d="M0.8 0.8V13.5L3.8 10.5L6.5 16.8L9 15.7L6.3 9.5H10.2Z" fill="#fff" stroke="#000" stroke-width="1.3" stroke-linejoin="miter"/></svg>
<svg style="left:51px;top:137px" width="21" height="12" viewBox="0 0 21 12"><rect x="1" y="1" width="18.5" height="10" fill="#fff" stroke="#000" stroke-width="1.6"/></svg>
<svg style="left:86px;top:133px" width="20" height="20" viewBox="0 0 20 20"><rect x="1" y="10" width="18" height="9" fill="#808080"/><rect x="1" y="1" width="18" height="18" fill="none" stroke="#000" stroke-width="1.6"/><path d="M1 10H19M10 10V19M1 1L10 10L19 1" stroke="#000" stroke-width="1.2" fill="none"/></svg>
<svg style="left:113px;top:134px" width="20" height="19" viewBox="0 0 20 19"><rect x="12" y="1" width="6.5" height="17" fill="#808080"/><rect x="1" y="1" width="17.5" height="17" fill="none" stroke="#000" stroke-width="1.6"/><path d="M12 1V18M12 6.5H18.5M12 12.5H18.5M1 18L12 1M6 11H12" stroke="#000" stroke-width="1.1" fill="none"/></svg>
<svg style="left:148px;top:137px" width="20" height="12" viewBox="0 0 20 12"><rect x="1" y="1" width="18" height="10" fill="#fff" stroke="#000" stroke-width="1.5"/><rect x="5.5" y="5" width="13.5" height="6" fill="#808080" stroke="#000" stroke-width="1"/></svg>
<svg style="left:175px;top:137px" width="20" height="12" viewBox="0 0 20 12"><rect x="1" y="1" width="18" height="10" fill="#fff" stroke="#000" stroke-width="1.5"/><rect x="5" y="1" width="14" height="5.5" fill="#808080" stroke="#000" stroke-width="1"/></svg>
<svg style="left:202px;top:135px" width="20" height="16" viewBox="0 0 20 16"><rect x="1" y="1" width="18" height="14" fill="#fff" stroke="#000" stroke-width="1.5"/><rect x="7" y="5" width="12" height="6" fill="#808080" stroke="#000" stroke-width="1"/></svg>
<svg style="left:229px;top:134px" width="20" height="19" viewBox="0 0 20 19"><rect x="0.5" y="0.5" width="18.5" height="18" rx="1.5" fill="#d8d8d8" stroke="#a0a0a0" stroke-width="0.8"/><rect x="3" y="2.5" width="13.5" height="14" fill="#808080" stroke="#000" stroke-width="1.4"/><path d="M3 9.5H16.5" stroke="#000" stroke-width="1.2"/></svg>
<svg style="left:264px;top:137px" width="20" height="13" viewBox="0 0 20 13"><rect x="1" y="1" width="18" height="11" fill="#fff" stroke="#000" stroke-width="1.5"/><path d="M13.5 1L18.5 6.5L13.5 12" fill="none" stroke="#000" stroke-width="1.2"/></svg>
<svg style="left:291px;top:136px" width="20" height="13" viewBox="0 0 20 13"><rect x="1" y="1" width="18" height="11" fill="#fff" stroke="#000" stroke-width="1.5"/><path d="M6.5 1L1.5 6.5L6.5 12" fill="none" stroke="#000" stroke-width="1.2"/></svg>
<svg style="left:318px;top:136px" width="20" height="13" viewBox="0 0 20 13"><rect x="1" y="1" width="18" height="11" fill="#fff" stroke="#000" stroke-width="1.5"/><path d="M6.5 1L1.5 6.5L6.5 12M13.5 1L18.5 6.5L13.5 12" fill="none" stroke="#000" stroke-width="1.2"/></svg>
<svg style="left:354px;top:135px" width="18" height="18" viewBox="0 0 18 18"><circle cx="7.4" cy="7.3" r="6.3" fill="#fff" stroke="#000" stroke-width="1.5"/><path d="M11.5 11.5L17 17" stroke="#000" stroke-width="2.2"/><path d="M4 7.3H10.8M7.4 4V10.6" stroke="#000" stroke-width="1.3"/></svg>
<svg style="left:381px;top:135px" width="18" height="18" viewBox="0 0 18 18"><circle cx="7.4" cy="7.3" r="6.3" fill="#fff" stroke="#000" stroke-width="1.5"/><path d="M11.5 11.5L17 17" stroke="#000" stroke-width="2.2"/><path d="M4 7.3H10.8" stroke="#000" stroke-width="1.3"/></svg>
<svg style="left:416px;top:132px" width="18" height="22" viewBox="0 0 18 22"><text x="9" y="19.6" text-anchor="middle" font-family="Liberation Serif" font-weight="bold" font-size="25" fill="#000">S</text></svg>
<svg style="left:442px;top:132px" width="19" height="22" viewBox="0 0 19 22"><text x="9.5" y="19.6" text-anchor="middle" font-family="Liberation Serif" font-weight="bold" font-size="25" fill="#000">C</text></svg>
<svg style="left:687px;top:134px" width="14" height="15" viewBox="0 0 14 15"><path d="M1 1H8.5L11 3.5V12.5H1Z" fill="#fff" stroke="#777" stroke-width="1.1"/><circle cx="6" cy="6.5" r="3.6" fill="#f4f4f4" stroke="#999" stroke-width="0.8"/><path d="M9 10L12.5 13.5" stroke="#777" stroke-width="1.8"/></svg>
<svg style="left:707px;top:132px" width="18" height="18" viewBox="0 0 18 18"><path d="M2.3 6.5A5.2 5.2 0 1 0 7.5 1.3" fill="none" stroke="#4a8aa8" stroke-width="4.2"/><path d="M2.3 6.5A5.2 5.2 0 1 0 7.5 1.3" fill="none" stroke="#a8d0e0" stroke-width="2.6"/><path d="M10.8 10.3L16 15.5" stroke="#b81820" stroke-width="4.6" stroke-linecap="round"/><path d="M10.8 10.3L16 15.5" stroke="#e8323a" stroke-width="3" stroke-linecap="round"/></svg>
<div style="left:395px;top:60px;width:39px;height:37px;border:5px solid #ec1c24;box-sizing:border-box"></div>
<div style="left:1797px;top:783px;width:2px;height:2px;background:#b0b0b0"></div>
<div style="left:1793px;top:787px;width:2px;height:2px;background:#b0b0b0"></div>
<div style="left:1797px;top:787px;width:2px;height:2px;background:#b0b0b0"></div>
<div style="left:1789px;top:791px;width:2px;height:2px;background:#b0b0b0"></div>
<div style="left:1793px;top:791px;width:2px;height:2px;background:#b0b0b0"></div>
<div style="left:1797px;top:791px;width:2px;height:2px;background:#b0b0b0"></div>
<div style="left:0px;top:0px;width:1px;height:797px;background:#9a9a9a"></div>
<div style="left:1802px;top:0px;width:2px;height:797px;background:#fff;border-left:1px solid #9a9a9a;box-sizing:border-box"></div>
<div style="left:0px;top:796px;width:1804px;height:1px;background:#9a9a9a"></div>
<div style="left:0px;top:0px;width:1804px;height:1px;background:#9a9a9a"></div>
<svg style="left:0px;top:0px" width="10" height="10" viewBox="0 0 10 10"><path d="M0 0H10V1A9 9 0 0 0 1 10H0Z" fill="#e6e6e6"/><path d="M10 0.5A9.5 9.5 0 0 0 0.5 10" fill="none" stroke="#a0a0a0" stroke-width="1"/></svg>
<svg style="left:1794px;top:0px" width="10" height="10" viewBox="0 0 10 10"><path d="M10 0H0V1A9 9 0 0 1 9 10H10Z" fill="#fff"/><path d="M0 0.5A9.5 9.5 0 0 1 9.5 10" fill="none" stroke="#a0a0a0" stroke-width="1"/></svg>
<svg style="left:0px;top:787px" width="10" height="10" viewBox="0 0 10 10"><path d="M0 10H10V9A9 9 0 0 1 1 0H0Z" fill="#e6e6e6"/><path d="M10 9.5A9.5 9.5 0 0 1 0.5 0" fill="none" stroke="#a0a0a0" stroke-width="1"/></svg>
<svg style="left:1794px;top:787px" width="10" height="10" viewBox="0 0 10 10"><path d="M10 10H0V9A9 9 0 0 0 9 0H10Z" fill="#fff"/><path d="M0 9.5A9.5 9.5 0 0 0 9.5 0" fill="none" stroke="#a0a0a0" stroke-width="1"/></svg>
</body></html>
